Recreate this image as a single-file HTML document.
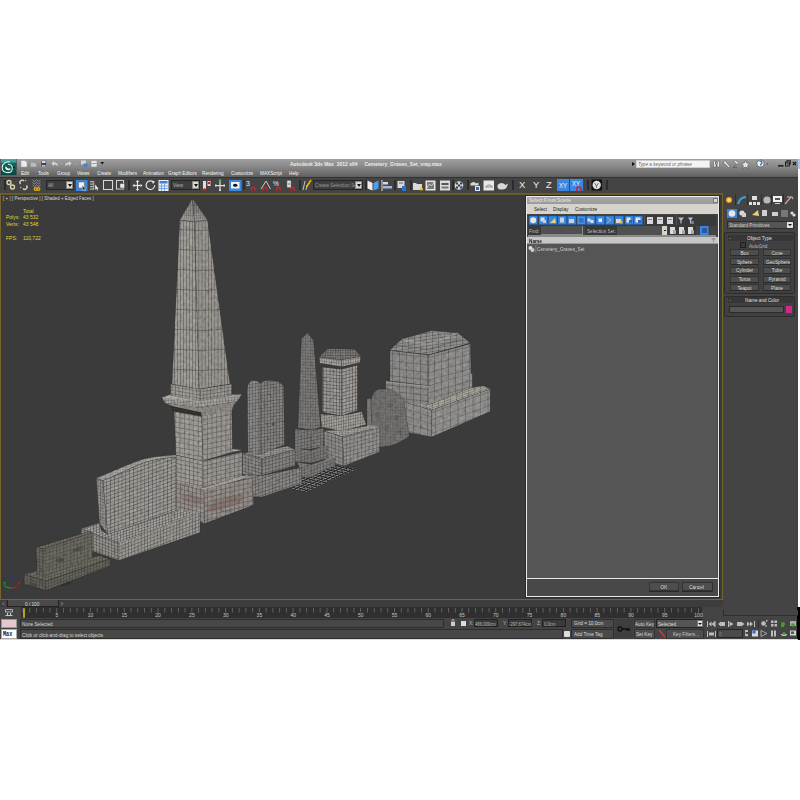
<!DOCTYPE html>
<html><head><meta charset="utf-8">
<style>
*{margin:0;padding:0;box-sizing:border-box}
html,body{width:800px;height:800px;background:#fff;overflow:hidden;font-family:"Liberation Sans",sans-serif}
.a{position:absolute}
.t{position:absolute;white-space:nowrap;font-family:"Liberation Sans",sans-serif}
svg{position:absolute;left:0;top:0}
</style></head><body>
<div class="a" style="left:0px;top:159px;width:798px;height:480px;background:#444"></div>
<div class="a" style="left:798px;top:159px;width:2px;height:9.5px;background:#a4c4ec"></div>
<div class="a" style="left:0px;top:159px;width:798px;height:18px;background:linear-gradient(#a0a0a0,#8a8a8a 40%,#6a6a6a 85%,#5e5e5e)"></div>
<svg style="left:0;top:159px" width="17" height="17" viewBox="0 0 17 17">
<defs><linearGradient id="lg" x1="0" y1="0" x2="0" y2="1"><stop offset="0" stop-color="#48aaa4"/><stop offset=".2" stop-color="#3a9690"/><stop offset=".28" stop-color="#156560"/><stop offset="1" stop-color="#0a4744"/></linearGradient></defs>
<rect x="0" y="0" width="17" height="16.5" fill="#5a5a5a"/>
<rect x="1" y="0" width="15.3" height="16" fill="url(#lg)"/>
<path d="M10 2.8 C6 2.5 2.2 4.5 2.2 8.5 C2.2 12 5 13.6 8 13.6 C11 13.6 12.3 11.5 12.3 9.2 C12.3 6.6 10.4 5.2 8 5.2" fill="none" stroke="#d8ecea" stroke-width="1.1"/>
<path d="M5.2 7.8 C5 10.4 6.6 11.3 8.4 11.3 C10 11.3 10.8 10.4 10.6 9.2 C9 9.8 7 9.4 6.2 7.4z" fill="#f2f8f8"/>
<path d="M12.8 8 h2 l-1 1.3z" fill="#000"/>
</svg>
<svg style="left:0;top:159px" width="110" height="10">
<path d="M21 1.5 h4 l2 2 v4.5 h-6z" fill="#ececec" stroke="#9a9a9a" stroke-width=".5"/>
<path d="M30.5 3 h2.5 l1 1 h2.5 v4 h-6z" fill="#b9bcc0" stroke="#8a8a8a" stroke-width=".5"/>
<rect x="41" y="1.5" width="5.5" height="6.5" rx="1" fill="#3c4050" stroke="#aab" stroke-width=".5"/><rect x="42" y="2" width="3.5" height="2" fill="#ddd"/><rect x="42" y="6" width="3.5" height="1.5" fill="#ccc"/>
<path d="M51.5 4.5 l2.5 -2.5 v1.5 c3 0 4 1.5 4 4 c-1 -1.5 -2 -2 -4 -2 v1.5z" fill="#d8d8d8"/>
<rect x="60.5" y="4.5" width="1" height="1" fill="#c8c8c8"/>
<path d="M71.5 4.5 l-2.5 -2.5 v1.5 c-3 0 -4 1.5 -4 4 c1 -1.5 2 -2 4 -2 v1.5z" fill="#d8d8d8"/>
<rect x="75.5" y="4.5" width="1" height="1" fill="#c8c8c8"/>
<rect x="81" y="1.5" width="5" height="4" fill="#d0d4dc"/><rect x="83.5" y="4.5" width="4" height="3.5" fill="#4a80d0"/>
<rect x="91" y="1.5" width="6" height="6.5" rx="1" fill="#e4e4e4" stroke="#888" stroke-width=".5"/><rect x="91.5" y="4" width="5" height=".6" fill="#777"/>
<path d="M100.5 3 h3.5 l-1.75 2.5z" fill="#111"/>
</svg>
<div class="t" style="left:290px;top:161px;font-size:5px;line-height:6.0px;color:#ececec;"><b>Autodesk 3ds Max&nbsp; 2012 x64&nbsp;&nbsp;&nbsp;&nbsp; Cemetery_Graves_Set_vray.max</b></div>
<div class="a" style="left:632px;top:162px;width:0;height:0;border-top:2px solid transparent;border-bottom:2px solid transparent;border-left:3px solid #111"></div>
<div class="a" style="left:636px;top:160px;width:74px;height:8px;background:#f4f4f4;border:1px solid #ccc"></div>
<div class="t" style="left:638px;top:161.2px;font-size:6.0px;line-height:7.0px;color:#666;transform:scaleX(0.78);transform-origin:0 0;"><i>Type a keyword or phrase</i></div>
<svg style="left:700px;top:159px" width="98" height="10">
<g fill="#e4e4e4" stroke="#333" stroke-width=".4">
<rect x="13.5" y="2" width="2.5" height="6" rx=".8"/><rect x="17" y="2" width="2.5" height="6" rx=".8"/><rect x="15.5" y="3.5" width="2" height="1.5"/>
<path d="M23.5 2.5 l2 -1 l1 2 l3.5 4 l-1.2 1.2 l-3.8 -3.8 l-1.5 -.5z"/>
<path d="M33.5 8 l3 -3 M34 2.5 l3 3 l1.5 -1.5 l-3 -3z M33 8.5 h4"/>
<path d="M745.5 0z"/>
<path d="M45.5 1.5 l1.3 2.6 l2.8 .4 l-2 2 l.5 2.8 l-2.6 -1.3 l-2.6 1.3 l.5 -2.8 l-2 -2 l2.8 -.4z"/>
</g>
<circle cx="60.5" cy="4.5" r="3.6" fill="#f4f4f4" stroke="#444" stroke-width=".6"/><path d="M59.5 2.5 q2 -1 2.5 .8 q.2 1.2 -1.2 1.8 v1.6" stroke="#2a5ac8" stroke-width="1.2" fill="none"/>
<rect x="67" y="4.5" width="1" height="1" fill="#333"/>
<rect x="78" y="6" width="5.5" height="1.6" fill="#222"/>
<rect x="85.5" y="3" width="4" height="4" fill="none" stroke="#222" stroke-width="1"/><rect x="87" y="1.5" width="3.5" height="3.5" fill="none" stroke="#222" stroke-width=".8"/>
<path d="M92.8 2.8 l3.3 3.3 M96.1 2.8 l-3.3 3.3" stroke="#111" stroke-width="1.2"/>
</svg>
<div class="t" style="left:21px;top:170.2px;font-size:6.0px;line-height:7.0px;color:#f8f8f8;transform:scaleX(0.78);transform-origin:0 0;">Edit</div>
<div class="t" style="left:38px;top:170.2px;font-size:6.0px;line-height:7.0px;color:#f8f8f8;transform:scaleX(0.78);transform-origin:0 0;">Tools</div>
<div class="t" style="left:57px;top:170.2px;font-size:6.0px;line-height:7.0px;color:#f8f8f8;transform:scaleX(0.78);transform-origin:0 0;">Group</div>
<div class="t" style="left:77px;top:170.2px;font-size:6.0px;line-height:7.0px;color:#f8f8f8;transform:scaleX(0.78);transform-origin:0 0;">Views</div>
<div class="t" style="left:97px;top:170.2px;font-size:6.0px;line-height:7.0px;color:#f8f8f8;transform:scaleX(0.78);transform-origin:0 0;">Create</div>
<div class="t" style="left:118px;top:170.2px;font-size:6.0px;line-height:7.0px;color:#f8f8f8;transform:scaleX(0.78);transform-origin:0 0;">Modifiers</div>
<div class="t" style="left:143px;top:170.2px;font-size:6.0px;line-height:7.0px;color:#f8f8f8;transform:scaleX(0.78);transform-origin:0 0;">Animation</div>
<div class="t" style="left:168px;top:170.2px;font-size:6.0px;line-height:7.0px;color:#f8f8f8;transform:scaleX(0.78);transform-origin:0 0;">Graph Editors</div>
<div class="t" style="left:202px;top:170.2px;font-size:6.0px;line-height:7.0px;color:#f8f8f8;transform:scaleX(0.78);transform-origin:0 0;">Rendering</div>
<div class="t" style="left:231px;top:170.2px;font-size:6.0px;line-height:7.0px;color:#f8f8f8;transform:scaleX(0.78);transform-origin:0 0;">Customize</div>
<div class="t" style="left:260px;top:170.2px;font-size:6.0px;line-height:7.0px;color:#f8f8f8;transform:scaleX(0.78);transform-origin:0 0;">MAXScript</div>
<div class="t" style="left:289px;top:170.2px;font-size:6.0px;line-height:7.0px;color:#f8f8f8;transform:scaleX(0.78);transform-origin:0 0;">Help</div>
<div class="a" style="left:0px;top:177px;width:798px;height:16px;background:#444;border-top:1px solid #333"></div>
<div class="a" style="left:4px;top:180px;width:1.5px;height:10px;background:#2c2c2c"></div>
<div class="a" style="left:128px;top:180px;width:1.5px;height:10px;background:#2c2c2c"></div>
<div class="a" style="left:243px;top:180px;width:1.5px;height:10px;background:#2c2c2c"></div>
<div class="a" style="left:299px;top:180px;width:1.5px;height:10px;background:#2c2c2c"></div>
<div class="a" style="left:365px;top:180px;width:1.5px;height:10px;background:#2c2c2c"></div>
<div class="a" style="left:394px;top:180px;width:1.5px;height:10px;background:#2c2c2c"></div>
<div class="a" style="left:410px;top:180px;width:1.5px;height:10px;background:#2c2c2c"></div>
<div class="a" style="left:452px;top:180px;width:1.5px;height:10px;background:#2c2c2c"></div>
<div class="a" style="left:467px;top:180px;width:1.5px;height:10px;background:#2c2c2c"></div>
<div class="a" style="left:512px;top:180px;width:1.5px;height:10px;background:#2c2c2c"></div>
<div class="a" style="left:587px;top:180px;width:1.5px;height:10px;background:#2c2c2c"></div>
<div class="a" style="left:606px;top:180px;width:1.5px;height:10px;background:#2c2c2c"></div>
<div class="a" style="left:46px;top:180px;width:28px;height:10px;background:#3e3e3e;border:1px solid #262626"></div>
<div class="t" style="left:48px;top:182.2px;font-size:6.0px;line-height:7.0px;color:#b8b8b8;transform:scaleX(0.78);transform-origin:0 0;">All</div>
<div class="a" style="left:66px;top:181px;width:7px;height:8px;background:#dcd9d0;border:1px solid #888"></div>
<div class="a" style="left:68px;top:184px;width:0;height:0;border-left:2px solid transparent;border-right:2px solid transparent;border-top:3px solid #111"></div>
<div class="a" style="left:171px;top:180px;width:29px;height:10px;background:#3e3e3e;border:1px solid #262626"></div>
<div class="t" style="left:173px;top:182.2px;font-size:6.0px;line-height:7.0px;color:#b8b8b8;transform:scaleX(0.78);transform-origin:0 0;">View</div>
<div class="a" style="left:192px;top:181px;width:7px;height:8px;background:#dcd9d0;border:1px solid #888"></div>
<div class="a" style="left:194px;top:184px;width:0;height:0;border-left:2px solid transparent;border-right:2px solid transparent;border-top:3px solid #111"></div>
<div class="a" style="left:313px;top:180px;width:50px;height:10px;background:#3e3e3e;border:1px solid #262626"></div>
<div class="t" style="left:315px;top:182.2px;font-size:6.0px;line-height:7.0px;color:#9a9a9a;transform:scaleX(0.78);transform-origin:0 0;">Create Selection Se</div>
<div class="a" style="left:355px;top:181px;width:7px;height:8px;background:#dcd9d0;border:1px solid #888"></div>
<div class="a" style="left:357px;top:184px;width:0;height:0;border-left:2px solid transparent;border-right:2px solid transparent;border-top:3px solid #111"></div>
<svg style="left:0;top:177px" width="800" height="16">
<g fill="none" stroke="#e4d8b0" stroke-width="1.3">
<circle cx="9" cy="5.5" r="2"/><circle cx="12.5" cy="10" r="2"/>
<path d="M20.5 7 a2.3 2.3 0 0 1 3.5 -3"/><path d="M26.5 8.5 a2.3 2.3 0 0 1 -3.5 3"/>
</g>
<g fill="#bbb"><rect x="25" y="3" width="1.2" height="1.2"/><rect x="20" y="10" width="1.2" height="1.2"/></g>
<g fill="none" stroke="#a8a8a8" stroke-width=".7"><path d="M32.5 3 l2 1.5 l2 -1.5 l2 1.5 l2 -1.5"/><path d="M32.5 5.5 l2 1.5 l2 -1.5 l2 1.5 l2 -1.5"/><path d="M32.5 8 l2 1.5 l2 -1.5 l2 1.5 l2 -1.5"/></g>
<g fill="none" stroke="#e6b400" stroke-width="1.2"><circle cx="35.5" cy="12" r="1.4"/><circle cx="38.5" cy="12" r="1.4"/></g>
<rect x="76" y="3" width="11.5" height="11" fill="#3a88e0"/>
<rect x="78.5" y="5" width="6" height="6" fill="#f2f2f2" stroke="#555" stroke-width=".5"/><path d="M82 8 l3.5 4 l-1 .3 l.8 1.5 l-.8 .3 l-.8 -1.5 l-1 .7z" fill="#222" stroke="#fff" stroke-width=".4"/>
<g fill="#b8b8b8"><rect x="90" y="4" width="3" height="1.2"/><rect x="90" y="6.5" width="3" height="1.2"/><rect x="90" y="9" width="3" height="1.2"/><rect x="90" y="11.5" width="3" height="1.2"/><rect x="93.2" y="4" width="1" height="9"/></g>
<path d="M95 7.5 l3.5 4 l-1.2 .2 l.8 1.5 l-.8 .4 l-.8 -1.6 l-1.2 .8z" fill="#eee"/>
<rect x="103.5" y="3.5" width="9" height="9" fill="none" stroke="#d8d8d8" stroke-width="1"/><path d="M112 12.5 l1.5 1.5" stroke="#aaa" stroke-width=".8"/>
<rect x="116.5" y="3.5" width="7" height="8.5" fill="none" stroke="#d0d0d0" stroke-width="1"/><rect x="120" y="6.5" width="4.5" height="4.5" fill="#e8e8e8" stroke="#444" stroke-width=".5"/>
<g fill="#e8e8e8"><path d="M137.5 3 l1.8 2 h-3.6z M137.5 14 l1.8 -2 h-3.6z M132.5 8.5 l2 -1.8 v3.6z M142.5 8.5 l-2 -1.8 v3.6z"/><rect x="136.9" y="5" width="1.2" height="7"/><rect x="134.5" y="7.9" width="6" height="1.2"/></g>
<path d="M153.5 5.2 a4.3 4.3 0 1 0 1.2 3" fill="none" stroke="#e4e4e4" stroke-width="1.2"/><path d="M151.5 3.5 l3.5 1 l-2 2.5z" fill="#e4e4e4"/>
<rect x="158.5" y="3" width="10" height="11" fill="#e8eef6"/><rect x="159.5" y="4" width="8" height="2.5" fill="#3a80d8"/><g stroke="#3a80d8" stroke-width=".6"><path d="M159 9 h9 M159 11.5 h9 M161.5 7 v7 M164.5 7 v7"/></g>
<path d="M203 4 h3 v8 h-3z M207.5 4 h3 v5 h-3z" fill="#dedede"/><circle cx="204.5" cy="12.5" r="1.3" fill="#d42020"/><circle cx="209" cy="6" r="1.3" fill="#d42020"/>
<g fill="#e0e0e0"><rect x="219.4" y="4" width="1.2" height="9"/><rect x="215.5" y="8" width="9" height="1.2"/></g><circle cx="220" cy="3.5" r="1.2" fill="#40c040"/><g fill="#e0e0e0"><rect x="215" y="7.5" width="1.5" height="2"/><rect x="223.5" y="7.5" width="1.5" height="2"/><rect x="219" y="12.5" width="2" height="1.5"/></g>
<rect x="229" y="3" width="12.5" height="11" fill="#3a88e0"/><rect x="231" y="5" width="8.5" height="6.5" fill="#f0f0f0"/><ellipse cx="235.2" cy="8.2" rx="2.2" ry="1.5" fill="#111"/>
<text x="246" y="8.5" font-size="7" fill="#eee" font-family="Liberation Sans">3</text>
<g fill="none" stroke="#d42020" stroke-width="1.6"><path d="M251.5 13.5 v-1.5 a1.8 1.8 0 0 1 3.6 0 v1.5"/><path d="M263 13.5 v-1.5 a1.8 1.8 0 0 1 3.6 0 v1.5"/><path d="M276.5 13.5 v-1.5 a1.8 1.8 0 0 1 3.6 0 v1.5"/><path d="M290.5 13.5 v-1.5 a1.8 1.8 0 0 1 3.6 0 v1.5"/></g>
<path d="M261 12 l5 -8 l4.5 8" fill="none" stroke="#d8d8d8" stroke-width=".9"/>
<text x="273" y="8.5" font-size="6.5" fill="#eee" font-family="Liberation Sans">%</text>
<rect x="287" y="3.5" width="4" height="7" fill="#e0e0e0" stroke="#666" stroke-width=".5"/><rect x="288" y="6.6" width="2" height=".8" fill="#444"/>
<path d="M303 13 l2 -9 M306 13 l1 -5" stroke="#d0d0d0" stroke-width=".9"/><path d="M306.5 10 l4.5 -7" stroke="#e8b800" stroke-width="1.6"/>
<path d="M367.5 3.5 l5 2.5 v7.5 l-5 -2z" fill="#eee"/><path d="M373.5 6 l5 -2.5 v8 l-5 2z" fill="#4aa0f0"/>
<g fill="#d8d8d8"><rect x="381.5" y="3" width="1" height="11"/><rect x="383" y="5" width="5" height="2.5"/><rect x="383" y="9" width="9" height="2.5" fill="#9ab8e0"/></g>
<rect x="397.5" y="4" width="7" height="7" fill="#d8d8d8"/><rect x="399" y="5.5" width="4" height="1" fill="#666"/><rect x="402" y="9" width="4" height="5" fill="#3070d0"/>
<path d="M413 6 h3 l1 1 h5 v6 h-9z" fill="#d8d8d8"/><circle cx="421.5" cy="12" r="1.6" fill="#f0c020"/>
<rect x="425.5" y="3.5" width="10" height="10" fill="#e6e6e6"/><rect x="427" y="5" width="7" height="7" fill="#777"/><path d="M427 11 q2 -5 3.5 -3 t3.5 -3" stroke="#eee" fill="none" stroke-width=".8"/>
<rect x="440" y="3.5" width="10" height="10" fill="#dcdcdc"/><rect x="441.5" y="6" width="7" height="2" fill="#555"/><rect x="441.5" y="9.5" width="7" height="2" fill="#777"/>
<circle cx="459" cy="8.5" r="4.3" fill="#d8d8d8"/><g fill="#3a3a3a"><rect x="456" y="5.5" width="2" height="2"/><rect x="460" y="5.5" width="2" height="2"/><rect x="458" y="7.5" width="2" height="2"/><rect x="456" y="9.5" width="2" height="2"/><rect x="460" y="9.5" width="2" height="2"/></g><circle cx="461.5" cy="10" r="1.2" fill="#2a6ad0"/>
<path d="M470.5 6.5 q3 -3 6 0 l2 -1 v3 h-8z" fill="#d8d8d8"/><rect x="475" y="9" width="5" height="5" fill="#e8e8e8"/><rect x="476" y="10" width="3" height="3" fill="#2a6ad0"/>
<rect x="483.5" y="3.5" width="10.5" height="10" fill="#e8e8e8"/><path d="M485.5 10 q3.5 -4 7 0z" fill="none" stroke="#666" stroke-width=".7"/>
<path d="M497.5 8 q4 -4 8 0 l2.5 -1.5 l-1 3 q-1 3 -4.5 3 h-2 q-3 0 -3 -3z" fill="#d8d8d8"/>
<rect x="591.5" y="2.5" width="10.5" height="11" fill="#111"/><circle cx="596.7" cy="8" r="4.2" fill="#e0e0e0"/><path d="M594.5 6 l2 3 l2 -3 M596.5 9 v2" stroke="#444" stroke-width=".7" fill="none"/>
</svg>
<div class="t" style="left:519px;top:180px;font-size:9.5px;line-height:10.5px;color:#eee;line-height:10px">X</div>
<div class="t" style="left:533px;top:180px;font-size:9.5px;line-height:10.5px;color:#eee;line-height:10px">Y</div>
<div class="t" style="left:546px;top:180px;font-size:9.5px;line-height:10.5px;color:#eee;line-height:10px">Z</div>
<div class="a" style="left:557px;top:179px;width:12px;height:12px;background:#3a88e0"></div>
<div class="t" style="left:558.5px;top:182.2px;font-size:7.8px;line-height:8.8px;color:#f0f4ff;transform:scaleX(0.78);transform-origin:0 0;line-height:7px">XY</div>
<div class="a" style="left:570px;top:179px;width:13px;height:12px;background:#3a88e0"></div>
<div class="t" style="left:572px;top:180.2px;font-size:7.8px;line-height:8.8px;color:#f0f4ff;transform:scaleX(0.78);transform-origin:0 0;line-height:7px">XY</div>
<svg style="left:576px;top:186px" width="6" height="5"><path d="M1 5 v-2 a2 2 0 0 1 4 0 v2" fill="none" stroke="#d42020" stroke-width="1.6"/></svg>
<div class="a" style="left:0px;top:193px;width:723px;height:407px;background:#3b3b3b;border:1px solid #74652c;border-top:2px solid #6a5c2a;box-shadow:inset 0 1px 0 #3a3830"></div>
<div class="t" style="left:3px;top:196px;font-size:4.5px;line-height:5.5px;color:#d8d8d8;">[ + ] [ Perspective ] [ Shaded + Edged Faces ]</div>
<div class="t" style="left:23px;top:208px;font-size:5px;line-height:6.0px;color:#e4d23c;">Total</div>
<div class="t" style="left:6px;top:214px;font-size:5px;line-height:6.0px;color:#e4d23c;">Polys:</div>
<div class="t" style="left:23px;top:214px;font-size:5px;line-height:6.0px;color:#e4d23c;">43 532</div>
<div class="t" style="left:6px;top:221px;font-size:5px;line-height:6.0px;color:#e4d23c;">Verts:</div>
<div class="t" style="left:23px;top:221px;font-size:5px;line-height:6.0px;color:#e4d23c;">43 548</div>
<div class="t" style="left:6px;top:235px;font-size:5px;line-height:6.0px;color:#e4d23c;">FPS:</div>
<div class="t" style="left:23px;top:235px;font-size:5px;line-height:6.0px;color:#e4d23c;">110,722</div>
<svg style="left:0;top:570px" width="30" height="22">
<path d="M11.4 18.4 V9" stroke="#2030c0" stroke-width="1.2"/>
<path d="M11.4 18.4 L6 17 L4 14.5" stroke="#10a020" stroke-width="1.2" fill="none"/>
<path d="M11.4 18.4 L17 16.5" stroke="#c02020" stroke-width="1.2"/>
<path d="M11.5 5 h2 l-2 2 h2" stroke="#2030c0" stroke-width=".8" fill="none"/>
<rect x="3.5" y="12" width="2" height="1.6" fill="#10a020"/>
<rect x="18" y="12.5" width="1.8" height="1.8" fill="#c02020"/>
</svg>
<svg style="left:0;top:0" width="800" height="800" viewBox="0 0 800 800"><defs><pattern id="p0" width="7" height="7.5" patternUnits="userSpaceOnUse" patternTransform="skewY(6.60)"><path d="M0 0.3H7M0.3 0V7.5" stroke="#1e1e1e" stroke-width="0.6" stroke-opacity="0.5" fill="none"/></pattern><pattern id="p1" width="7" height="7.5" patternUnits="userSpaceOnUse" patternTransform="skewY(-15.07)"><path d="M0 0.3H7M0.3 0V7.5" stroke="#1e1e1e" stroke-width="0.6" stroke-opacity="0.5" fill="none"/></pattern><pattern id="p2" width="6" height="3.2" patternUnits="userSpaceOnUse" patternTransform="skewY(-8.53)"><path d="M0 0.3H6M0.3 0V3.2" stroke="#1e1e1e" stroke-width="0.6" stroke-opacity="0.45" fill="none"/></pattern><pattern id="p3" width="7" height="6" patternUnits="userSpaceOnUse" patternTransform="skewY(6.25)"><path d="M0 0.3H7M0.3 0V6" stroke="#1e1e1e" stroke-width="0.6" stroke-opacity="0.5" fill="none"/></pattern><pattern id="p4" width="7" height="6" patternUnits="userSpaceOnUse" patternTransform="skewY(-16.10)"><path d="M0 0.3H7M0.3 0V6" stroke="#1e1e1e" stroke-width="0.6" stroke-opacity="0.5" fill="none"/></pattern><pattern id="p5" width="6" height="2.2" patternUnits="userSpaceOnUse" patternTransform="skewY(-19.29)"><path d="M0 0.3H6M0.3 0V2.2" stroke="#1e1e1e" stroke-width="0.6" stroke-opacity="0.4" fill="none"/></pattern><pattern id="p6" width="7" height="7" patternUnits="userSpaceOnUse" patternTransform="skewY(16.68)"><path d="M0 0.3H7M0.3 0V7" stroke="#1e1e1e" stroke-width="0.6" stroke-opacity="0.5" fill="none"/></pattern><pattern id="p7" width="7.5" height="7" patternUnits="userSpaceOnUse" patternTransform="skewY(-19.75)"><path d="M0 0.3H7.5M0.3 0V7" stroke="#1e1e1e" stroke-width="0.6" stroke-opacity="0.5" fill="none"/></pattern><pattern id="p8" width="3" height="2" patternUnits="userSpaceOnUse" patternTransform="skewY(0.00)"><path d="M0 0.3H3M0.3 0V2" stroke="#1e1e1e" stroke-width="0.6" stroke-opacity="0.3" fill="none"/></pattern><pattern id="p9" width="3.6" height="3.6" patternUnits="userSpaceOnUse" patternTransform="skewY(17.63)"><path d="M0 0.3H3.6M0.3 0V3.6" stroke="#1e1e1e" stroke-width="0.6" stroke-opacity="0.55" fill="none"/></pattern><pattern id="p10" width="3.8" height="3.8" patternUnits="userSpaceOnUse" patternTransform="skewY(-14.83)"><path d="M0 0.3H3.8M0.3 0V3.8" stroke="#1e1e1e" stroke-width="0.6" stroke-opacity="0.55" fill="none"/></pattern><pattern id="p11" width="2.4" height="3" patternUnits="userSpaceOnUse" patternTransform="skewY(-11.31)"><path d="M0 0.3H2.4M0.3 0V3" stroke="#1e1e1e" stroke-width="0.6" stroke-opacity="0.5" fill="none"/></pattern><pattern id="p12" width="3.2" height="3.4" patternUnits="userSpaceOnUse" patternTransform="skewY(5.92)"><path d="M0 0.3H3.2M0.3 0V3.4" stroke="#1e1e1e" stroke-width="0.6" stroke-opacity="0.6" fill="none"/></pattern><pattern id="p13" width="3.2" height="3.4" patternUnits="userSpaceOnUse" patternTransform="skewY(-14.29)"><path d="M0 0.3H3.2M0.3 0V3.4" stroke="#1e1e1e" stroke-width="0.6" stroke-opacity="0.6" fill="none"/></pattern><pattern id="p14" width="2.4" height="3" patternUnits="userSpaceOnUse" patternTransform="skewY(7.00)"><path d="M0 0.3H2.4M0.3 0V3" stroke="#1e1e1e" stroke-width="0.6" stroke-opacity="0.5" fill="none"/></pattern><pattern id="p15" width="2.4" height="3" patternUnits="userSpaceOnUse" patternTransform="skewY(-10.33)"><path d="M0 0.3H2.4M0.3 0V3" stroke="#1e1e1e" stroke-width="0.6" stroke-opacity="0.5" fill="none"/></pattern><pattern id="p16" width="2.5" height="2.5" patternUnits="userSpaceOnUse" patternTransform="skewY(0.00)"><path d="M0 0.3H2.5M0.3 0V2.5" stroke="#1e1e1e" stroke-width="0.6" stroke-opacity="0.5" fill="none"/></pattern><pattern id="p17" width="3.2" height="3.2" patternUnits="userSpaceOnUse" patternTransform="skewY(-19.29)"><path d="M0 0.3H3.2M0.3 0V3.2" stroke="#1e1e1e" stroke-width="0.6" stroke-opacity="0.4" fill="none"/></pattern><pattern id="p18" width="3.2" height="3.2" patternUnits="userSpaceOnUse" patternTransform="skewY(-16.70)"><path d="M0 0.3H3.2M0.3 0V3.2" stroke="#1e1e1e" stroke-width="0.6" stroke-opacity="0.4" fill="none"/></pattern><pattern id="p19" width="3.2" height="3.2" patternUnits="userSpaceOnUse" patternTransform="skewY(-11.31)"><path d="M0 0.3H3.2M0.3 0V3.2" stroke="#1e1e1e" stroke-width="0.6" stroke-opacity="0.4" fill="none"/></pattern><pattern id="p20" width="3.4" height="3.4" patternUnits="userSpaceOnUse" patternTransform="skewY(-18.26)"><path d="M0 0.3H3.4M0.3 0V3.4" stroke="#1e1e1e" stroke-width="0.6" stroke-opacity="0.55" fill="none"/></pattern><pattern id="p21" width="3.4" height="3.4" patternUnits="userSpaceOnUse" patternTransform="skewY(16.70)"><path d="M0 0.3H3.4M0.3 0V3.4" stroke="#1e1e1e" stroke-width="0.6" stroke-opacity="0.55" fill="none"/></pattern><pattern id="p22" width="3.4" height="3.4" patternUnits="userSpaceOnUse" patternTransform="skewY(-15.11)"><path d="M0 0.3H3.4M0.3 0V3.4" stroke="#1e1e1e" stroke-width="0.6" stroke-opacity="0.55" fill="none"/></pattern><pattern id="p23" width="4" height="4.5" patternUnits="userSpaceOnUse" patternTransform="skewY(13.50)"><path d="M0 0.3H4M0.3 0V4.5" stroke="#1e1e1e" stroke-width="0.6" stroke-opacity="0.55" fill="none"/></pattern><pattern id="p24" width="4.5" height="4.5" patternUnits="userSpaceOnUse" patternTransform="skewY(-12.95)"><path d="M0 0.3H4.5M0.3 0V4.5" stroke="#1e1e1e" stroke-width="0.6" stroke-opacity="0.55" fill="none"/></pattern><pattern id="p25" width="4.2" height="4.2" patternUnits="userSpaceOnUse" patternTransform="skewY(12.41)"><path d="M0 0.3H4.2M0.3 0V4.2" stroke="#1e1e1e" stroke-width="0.6" stroke-opacity="0.55" fill="none"/></pattern><pattern id="p26" width="4.5" height="4.2" patternUnits="userSpaceOnUse" patternTransform="skewY(-12.95)"><path d="M0 0.3H4.5M0.3 0V4.2" stroke="#1e1e1e" stroke-width="0.6" stroke-opacity="0.55" fill="none"/></pattern><pattern id="p27" width="4.6" height="5" patternUnits="userSpaceOnUse" patternTransform="skewY(10.20)"><path d="M0 0.3H4.6M0.3 0V5" stroke="#1e1e1e" stroke-width="0.6" stroke-opacity="0.55" fill="none"/></pattern><pattern id="p28" width="4.6" height="5" patternUnits="userSpaceOnUse" patternTransform="skewY(-11.31)"><path d="M0 0.3H4.6M0.3 0V5" stroke="#1e1e1e" stroke-width="0.6" stroke-opacity="0.55" fill="none"/></pattern><pattern id="p29" width="3" height="3" patternUnits="userSpaceOnUse" patternTransform="skewY(-5.71)"><path d="M0 0.3H3M0.3 0V3" stroke="#1e1e1e" stroke-width="0.6" stroke-opacity="0.35" fill="none"/></pattern><pattern id="p30" width="3.5" height="3.5" patternUnits="userSpaceOnUse" patternTransform="skewY(9.65)"><path d="M0 0.3H3.5M0.3 0V3.5" stroke="#1e1e1e" stroke-width="0.6" stroke-opacity="0.5" fill="none"/></pattern><pattern id="p31" width="3.5" height="3.5" patternUnits="userSpaceOnUse" patternTransform="skewY(-9.09)"><path d="M0 0.3H3.5M0.3 0V3.5" stroke="#1e1e1e" stroke-width="0.6" stroke-opacity="0.5" fill="none"/></pattern><pattern id="p32" width="3" height="20" patternUnits="userSpaceOnUse" patternTransform="skewY(2.86)"><path d="M0 0.3H3M0.3 0V20" stroke="#1e1e1e" stroke-width="0.6" stroke-opacity="0.6" fill="none"/></pattern><pattern id="p33" width="3.2" height="20" patternUnits="userSpaceOnUse" patternTransform="skewY(-2.86)"><path d="M0 0.3H3.2M0.3 0V20" stroke="#1e1e1e" stroke-width="0.6" stroke-opacity="0.6" fill="none"/></pattern><pattern id="p34" width="2" height="2.5" patternUnits="userSpaceOnUse" patternTransform="skewY(0.00)"><path d="M0 0.3H2M0.3 0V2.5" stroke="#1e1e1e" stroke-width="0.6" stroke-opacity="0.3" fill="none"/></pattern><pattern id="p35" width="3" height="2.6" patternUnits="userSpaceOnUse" patternTransform="skewY(-18.26)"><path d="M0 0.3H3M0.3 0V2.6" stroke="#1e1e1e" stroke-width="0.6" stroke-opacity="0.55" fill="none"/></pattern><pattern id="p36" width="3" height="3" patternUnits="userSpaceOnUse" patternTransform="skewY(19.80)"><path d="M0 0.3H3M0.3 0V3" stroke="#1e1e1e" stroke-width="0.6" stroke-opacity="0.55" fill="none"/></pattern><pattern id="p37" width="3.2" height="3.4" patternUnits="userSpaceOnUse" patternTransform="skewY(-20.81)"><path d="M0 0.3H3.2M0.3 0V3.4" stroke="#1e1e1e" stroke-width="0.6" stroke-opacity="0.55" fill="none"/></pattern><pattern id="p38" width="2.5" height="3" patternUnits="userSpaceOnUse" patternTransform="skewY(16.70)"><path d="M0 0.3H2.5M0.3 0V3" stroke="#1e1e1e" stroke-width="0.6" stroke-opacity="0.5" fill="none"/></pattern><pattern id="p39" width="3" height="3" patternUnits="userSpaceOnUse" patternTransform="skewY(-16.70)"><path d="M0 0.3H3M0.3 0V3" stroke="#1e1e1e" stroke-width="0.6" stroke-opacity="0.45" fill="none"/></pattern><pattern id="p40" width="3" height="3" patternUnits="userSpaceOnUse" patternTransform="skewY(16.70)"><path d="M0 0.3H3M0.3 0V3" stroke="#1e1e1e" stroke-width="0.6" stroke-opacity="0.45" fill="none"/></pattern><pattern id="p41" width="3" height="3" patternUnits="userSpaceOnUse" patternTransform="skewY(-19.29)"><path d="M0 0.3H3M0.3 0V3" stroke="#1e1e1e" stroke-width="0.6" stroke-opacity="0.45" fill="none"/></pattern><pattern id="p42" width="3" height="2" patternUnits="userSpaceOnUse" patternTransform="skewY(-16.70)"><path d="M0 0.3H3M0.3 0V2" stroke="#1e1e1e" stroke-width="0.6" stroke-opacity="0.45" fill="none"/></pattern><pattern id="p43" width="3" height="3" patternUnits="userSpaceOnUse" patternTransform="skewY(14.04)"><path d="M0 0.3H3M0.3 0V3" stroke="#1e1e1e" stroke-width="0.6" stroke-opacity="0.45" fill="none"/></pattern><pattern id="p44" width="3.5" height="3.5" patternUnits="userSpaceOnUse" patternTransform="skewY(-16.70)"><path d="M0 0.3H3.5M0.3 0V3.5" stroke="#1e1e1e" stroke-width="0.6" stroke-opacity="0.45" fill="none"/></pattern><pattern id="chk" width="4" height="4" patternUnits="userSpaceOnUse" patternTransform="matrix(1.05 -0.475 0.85 0.18 0 0)"><rect width="4" height="4" fill="#2a2a2a"/><path d="M0 0.35H4M0.35 0V4" stroke="#a0a0a0" stroke-width=".7"/></pattern><pattern id="g25" width="2.5" height="3" patternUnits="userSpaceOnUse" patternTransform="skewY(2)"><path d="M0 0.3H2.5M0.3 0V3" stroke="#1e1e1e" stroke-width=".5" stroke-opacity=".45" fill="none"/></pattern><pattern id="g3n" width="3" height="3.2" patternUnits="userSpaceOnUse" patternTransform="skewY(-8)"><path d="M0 0.3H3M0.3 0V3.2" stroke="#1e1e1e" stroke-width=".55" stroke-opacity=".5" fill="none"/></pattern><pattern id="wall" width="3.8" height="3.6" patternUnits="userSpaceOnUse" patternTransform="skewY(-19)"><path d="M0 0.3H3.8M0.3 0V3.6" stroke="#1e1e1e" stroke-width=".6" stroke-opacity=".6" fill="none"/></pattern><filter id="nz" x="0" y="0" width="800" height="800" filterUnits="userSpaceOnUse" color-interpolation-filters="sRGB"><feTurbulence type="fractalNoise" baseFrequency="0.3" numOctaves="3" seed="7" result="t"/><feColorMatrix in="t" type="matrix" values="0.33 0.33 0.33 0 0 0.33 0.33 0.33 0 0 0.33 0.33 0.33 0 0 0 0 0 0 1" result="g"/><feComposite in="SourceGraphic" in2="g" operator="arithmetic" k1="0.6" k2="0.7" k3="0" k4="0"/></filter><linearGradient id="pyrL" x1="0" y1="0" x2="0" y2="1"><stop offset="0" stop-color="#7a7774"/><stop offset="1" stop-color="#a29f9a"/></linearGradient><linearGradient id="pyrR" x1="0" y1="0" x2="0" y2="1"><stop offset="0" stop-color="#74716e"/><stop offset="1" stop-color="#9a9792"/></linearGradient></defs><g filter="url(#nz)"><polygon points="390,350.3 428.9,354.8 428.9,385.7 390,381" fill="#878684"/>
<polygon points="390,350.3 428.9,354.8 428.9,385.7 390,381" fill="url(#p0)"/>
<polygon points="390,350.3 428.9,354.8 428.9,385.7 390,381" fill="none" stroke="#2e2e2e" stroke-width="0.5" stroke-opacity=".45"/>
<polygon points="428.9,354.8 470.5,343.6 471,374 428.9,385.7" fill="#8b8a88"/>
<polygon points="428.9,354.8 470.5,343.6 471,374 428.9,385.7" fill="url(#p1)"/>
<polygon points="428.9,354.8 470.5,343.6 471,374 428.9,385.7" fill="none" stroke="#2e2e2e" stroke-width="0.5" stroke-opacity=".45"/>
<polygon points="389.5,350.3 401.9,339 432.2,330.6 458,332.9 470.5,343 428.9,354.8" fill="#8d8c8a"/>
<polygon points="389.5,350.3 401.9,339 432.2,330.6 458,332.9 470.5,343 428.9,354.8" fill="url(#p2)"/>
<polygon points="389.5,350.3 401.9,339 432.2,330.6 458,332.9 470.5,343 428.9,354.8" fill="none" stroke="#2e2e2e" stroke-width="0.5" stroke-opacity=".45"/>
<path d="M401.9 339 L428 344.5 L458 332.9" fill="none" stroke="#b0afac" stroke-width="1.2" opacity=".45"/>
<path d="M395 345 L428.5 349.5 L465 338" fill="none" stroke="#2e2e2e" stroke-width=".6" opacity=".5"/>
<path d="M389.5 350.3 L428.9 354.8 L470.5 343.6" fill="none" stroke="#2e2e2e" stroke-width=".7" opacity=".6"/>
<polygon points="386,381 428.9,385.7 428.9,404.7 386,401" fill="#858482"/>
<polygon points="386,381 428.9,385.7 428.9,404.7 386,401" fill="url(#p3)"/>
<polygon points="428.9,385.7 472.2,373.2 472.2,387.5 428.9,404.7" fill="#8a8987"/>
<polygon points="428.9,385.7 472.2,373.2 472.2,387.5 428.9,404.7" fill="url(#p4)"/>
<path d="M386 382 L428.9 386.7 L472.2 374.2" fill="none" stroke="#b4b3b0" stroke-width="1" opacity=".45"/>
<polygon points="404,401.7 431.7,410 490.2,389 483.4,386 472.2,387.5 428.9,404.7 404,402" fill="#a4a198"/>
<polygon points="404,401.7 431.7,410 490.2,389 483.4,386 472.2,387.5 428.9,404.7 404,402" fill="url(#p5)"/>
<polygon points="404,401.7 431.7,410 431.7,437 404,431.7" fill="#898886"/>
<polygon points="404,401.7 431.7,410 431.7,437 404,431.7" fill="url(#p6)"/>
<polygon points="404,401.7 431.7,410 431.7,437 404,431.7" fill="none" stroke="#2e2e2e" stroke-width="0.5" stroke-opacity=".45"/>
<polygon points="431.7,410 490.2,389 490.2,411.5 431.7,437" fill="#8e8d8b"/>
<polygon points="431.7,410 490.2,389 490.2,411.5 431.7,437" fill="url(#p7)"/>
<polygon points="431.7,410 490.2,389 490.2,411.5 431.7,437" fill="none" stroke="#2e2e2e" stroke-width="0.5" stroke-opacity=".45"/>
<polygon points="367,399 373,398 373,428 367,427" fill="#767473"/>
<polygon points="367,399 373,398 373,428 367,427" fill="none" stroke="#2e2e2e" stroke-width="0.5" stroke-opacity=".45"/>
<path d="M371 402 C371 392 377 388 383 389 C389 388 395 390 403.5 400 L409 436 C402 442 392 446 380 447 L372 438 Z" fill="#6c6a69" stroke="#3a3a3a" stroke-width=".6"/>
<path d="M380 392 C385 388 398 389 403.5 400 L409 436 C402 442 392 446 380 447 Z" fill="#73716f"/>
<g fill="#4a4846" opacity=".3"><ellipse cx="390" cy="405" rx="3" ry="2"/><ellipse cx="396" cy="418" rx="2.5" ry="3"/><ellipse cx="386" cy="428" rx="2" ry="3"/><ellipse cx="399" cy="432" rx="3" ry="2"/><ellipse cx="377" cy="415" rx="1.5" ry="3"/></g>
<path d="M380 392 C385 388 398 389 403.5 400 L409 436 C402 442 392 446 380 447 Z" fill="url(#g25)" opacity=".6"/>
<polygon points="292,489 306,492 357,469 335,464 300,478" fill="#2c2c2c"/>
<polygon points="292,489 306,492 357,469 335,464 300,478" fill="url(#chk)"/>
<polygon points="323.3,430.7 342.5,436.8 379.5,427 372,425 346,430" fill="#a29f9a"/>
<polygon points="323.3,430.7 342.5,436.8 379.5,427 372,425 346,430" fill="url(#p8)"/>
<polygon points="323.3,430.7 342.5,436.8 344,466 325.3,460.9" fill="#8b8986"/>
<polygon points="323.3,430.7 342.5,436.8 344,466 325.3,460.9" fill="url(#p9)"/>
<polygon points="323.3,430.7 342.5,436.8 344,466 325.3,460.9" fill="none" stroke="#2e2e2e" stroke-width="0.5" stroke-opacity=".45"/>
<polygon points="342.5,436.8 379.5,427 379.5,452 344,466" fill="#908e8b"/>
<polygon points="342.5,436.8 379.5,427 379.5,452 344,466" fill="url(#p10)"/>
<polygon points="342.5,436.8 379.5,427 379.5,452 344,466" fill="none" stroke="#2e2e2e" stroke-width="0.5" stroke-opacity=".45"/>
<polygon points="320.6,414 341.7,415.8 361.8,411.4 366.2,424.6 342.5,431.6 321.5,427" fill="#a4a09b"/>
<polygon points="320.6,414 341.7,415.8 361.8,411.4 366.2,424.6 342.5,431.6 321.5,427" fill="url(#p11)"/>
<polygon points="320.6,414 341.7,415.8 361.8,411.4 366.2,424.6 342.5,431.6 321.5,427" fill="none" stroke="#2e2e2e" stroke-width="0.5" stroke-opacity=".45"/>
<polygon points="322.4,367 341.7,369 341.7,415.8 322.4,412.3" fill="#9a9693"/>
<polygon points="322.4,367 341.7,369 341.7,415.8 322.4,412.3" fill="url(#p12)"/>
<polygon points="322.4,367 341.7,369 341.7,415.8 322.4,412.3" fill="none" stroke="#2e2e2e" stroke-width="0.5" stroke-opacity=".45"/>
<polygon points="341.7,369 357.4,365 357.4,410.6 341.7,415.8" fill="#9d9996"/>
<polygon points="341.7,369 357.4,365 357.4,410.6 341.7,415.8" fill="url(#p13)"/>
<polygon points="341.7,369 357.4,365 357.4,410.6 341.7,415.8" fill="none" stroke="#2e2e2e" stroke-width="0.5" stroke-opacity=".45"/>
<polygon points="318.9,357 341.7,359.8 341.7,366.8 319.8,363.3" fill="#a5a19d"/>
<polygon points="318.9,357 341.7,359.8 341.7,366.8 319.8,363.3" fill="url(#p14)"/>
<polygon points="318.9,357 341.7,359.8 341.7,366.8 319.8,363.3" fill="none" stroke="#2e2e2e" stroke-width="0.5" stroke-opacity=".45"/>
<polygon points="341.7,359.8 360.9,356.3 360,362.4 341.7,366.8" fill="#a8a4a0"/>
<polygon points="341.7,359.8 360.9,356.3 360,362.4 341.7,366.8" fill="url(#p15)"/>
<polygon points="341.7,359.8 360.9,356.3 360,362.4 341.7,366.8" fill="none" stroke="#2e2e2e" stroke-width="0.5" stroke-opacity=".45"/>
<polygon points="318.9,357 327.7,348.4 354.8,349.3 360.9,356.3 341.7,359.8" fill="#7d7a78"/>
<polygon points="318.9,357 327.7,348.4 354.8,349.3 360.9,356.3 341.7,359.8" fill="url(#p16)"/>
<polygon points="318.9,357 327.7,348.4 354.8,349.3 360.9,356.3 341.7,359.8" fill="none" stroke="#2e2e2e" stroke-width="0.5" stroke-opacity=".45"/>
<polygon points="297.5,463 311.5,465 335,457 335,465 311.5,477 302.5,477.5" fill="#7a7876"/>
<polygon points="297.5,463 311.5,465 335,457 335,465 311.5,477 302.5,477.5" fill="url(#p17)"/>
<polygon points="297.5,463 311.5,465 335,457 335,465 311.5,477 302.5,477.5" fill="none" stroke="#2e2e2e" stroke-width="0.5" stroke-opacity=".45"/>
<polygon points="294.9,449 311.5,451 328,445 328,458 311.5,463 294.9,462" fill="#777573"/>
<polygon points="294.9,449 311.5,451 328,445 328,458 311.5,463 294.9,462" fill="url(#p18)"/>
<polygon points="294.9,449 311.5,451 328,445 328,458 311.5,463 294.9,462" fill="none" stroke="#2e2e2e" stroke-width="0.5" stroke-opacity=".45"/>
<polygon points="294.9,429 311.5,430 323.75,428 323.75,446.5 311.5,449 294.9,449" fill="#797775"/>
<polygon points="294.9,429 311.5,430 323.75,428 323.75,446.5 311.5,449 294.9,449" fill="url(#p19)"/>
<polygon points="294.9,429 311.5,430 323.75,428 323.75,446.5 311.5,449 294.9,449" fill="none" stroke="#2e2e2e" stroke-width="0.5" stroke-opacity=".45"/>
<path d="M294.9 449 L311.5 451 L328 445 M297.5 463 L311.5 465 L335 457" stroke="#9a9894" stroke-width="1" fill="none" opacity=".6"/>
<path d="M311.5 430 V477" stroke="#3a3a3a" stroke-width=".6" opacity=".6"/>
<path d="M307.5 332.6 L301.4 338.75 L297.9 428 L313 430 L320.6 427 L313.6 340.5 Z" fill="#7b7977" stroke="#333" stroke-width=".5" stroke-opacity=".5"/>
<path d="M307.5 332.6 L301.4 338.75 L297.9 428 L313 430 L320.6 427 L313.6 340.5 Z" fill="url(#g25)"/>
<polygon points="244,474 262,475.6 301.6,467.5 301.6,483.7 262,497 252.9,496.7" fill="#858381"/>
<polygon points="244,474 262,475.6 301.6,467.5 301.6,483.7 262,497 252.9,496.7" fill="url(#p20)"/>
<polygon points="244,474 262,475.6 301.6,467.5 301.6,483.7 262,497 252.9,496.7" fill="none" stroke="#2e2e2e" stroke-width="0.5" stroke-opacity=".45"/>
<polygon points="242.3,452.8 261.8,458.5 295,449.6 287,446 260,452" fill="#959390"/>
<polygon points="242.3,452.8 261.8,458.5 295,449.6 287,446 260,452" fill="url(#p8)"/>
<polygon points="242.3,452.8 261.8,458.5 295,449.6 287,446 260,452" fill="none" stroke="#2e2e2e" stroke-width="0.5" stroke-opacity=".45"/>
<polygon points="242.3,452.8 261.8,458.5 261.8,475.6 242.3,474" fill="#868482"/>
<polygon points="242.3,452.8 261.8,458.5 261.8,475.6 242.3,474" fill="url(#p21)"/>
<polygon points="242.3,452.8 261.8,458.5 261.8,475.6 242.3,474" fill="none" stroke="#2e2e2e" stroke-width="0.5" stroke-opacity=".45"/>
<polygon points="261.8,458.5 295,449.6 295,465.8 261.8,475.6" fill="#838180"/>
<polygon points="261.8,458.5 295,449.6 295,465.8 261.8,475.6" fill="url(#p22)"/>
<polygon points="261.8,458.5 295,449.6 295,465.8 261.8,475.6" fill="none" stroke="#2e2e2e" stroke-width="0.5" stroke-opacity=".45"/>
<path d="M247.2 389.5 C248 383 250 380.3 253 380.3 C257 380.3 259 382 260.2 383.5 C262 381 266 380.2 270 380.3 C278 380.8 282 383 283.7 386 L284.5 444.7 L260.2 454.5 L248 452.8 Z" fill="#817f7d" stroke="#333" stroke-width=".5" stroke-opacity=".5"/>
<path d="M247.2 389.5 C248 383 250 380.3 253 380.3 C257 380.3 259 382 260.2 383.5 C262 381 266 380.2 270 380.3 C278 380.8 282 383 283.7 386 L284.5 444.7 L260.2 454.5 L248 452.8 Z" fill="url(#g3n)"/>
<path d="M247.2 389.5 C248 383 250 380.3 253 380.3 C257 380.3 259 382 260.2 383.5 L260.2 454.5 L248 452.8 Z" fill="#fff" opacity=".05"/>
<path d="M260.2 385 L260.2 454.5" stroke="#3a3a3a" stroke-width=".7" opacity=".7"/>
<circle cx="273" cy="424" r="1.6" fill="#5a4a40"/>
<polygon points="175.5,482 204,488.75 204.4,523.75 175.5,511" fill="#928c88"/>
<polygon points="175.5,482 204,488.75 204.4,523.75 175.5,511" fill="url(#p23)"/>
<polygon points="175.5,482 204,488.75 204.4,523.75 175.5,511" fill="none" stroke="#2e2e2e" stroke-width="0.5" stroke-opacity=".45"/>
<polygon points="204,488.75 252,477.5 253.75,505 204.4,523.75" fill="#8f8985"/>
<polygon points="204,488.75 252,477.5 253.75,505 204.4,523.75" fill="url(#p24)"/>
<polygon points="204,488.75 252,477.5 253.75,505 204.4,523.75" fill="none" stroke="#2e2e2e" stroke-width="0.5" stroke-opacity=".45"/>
<ellipse cx="226" cy="503" rx="20" ry="5" fill="#6e4e48" opacity=".35" transform="rotate(-20 226 503)"/>
<ellipse cx="192" cy="499" rx="12" ry="4" fill="#6e4e48" opacity=".28" transform="rotate(14 192 499)"/>
<polygon points="176,481 203,487 242,475.6 251,477 204,489.5 178,483" fill="#a09c98"/>
<polygon points="176,455 203,461 203,488 176,482.5" fill="#9b9894"/>
<polygon points="176,455 203,461 203,488 176,482.5" fill="url(#p25)"/>
<polygon points="176,455 203,461 203,488 176,482.5" fill="none" stroke="#2e2e2e" stroke-width="0.5" stroke-opacity=".45"/>
<polygon points="203,461 242,452 242,475.6 203,488" fill="#95928e"/>
<polygon points="203,461 242,452 242,475.6 203,488" fill="url(#p26)"/>
<polygon points="203,461 242,452 242,475.6 203,488" fill="none" stroke="#2e2e2e" stroke-width="0.5" stroke-opacity=".45"/>
<polygon points="174,452 203,458 242,450 232.5,449 202,455" fill="#a3a09c"/>
<polygon points="174,411 201.6,416 203,461 176,455" fill="#9c9894"/>
<polygon points="174,411 201.6,416 203,461 176,455" fill="url(#p27)"/>
<polygon points="174,411 201.6,416 203,461 176,455" fill="none" stroke="#2e2e2e" stroke-width="0.5" stroke-opacity=".45"/>
<polygon points="201.6,416 231.8,410 232.5,452 203,461" fill="#96928e"/>
<polygon points="201.6,416 231.8,410 232.5,452 203,461" fill="url(#p28)"/>
<polygon points="201.6,416 231.8,410 232.5,452 203,461" fill="none" stroke="#2e2e2e" stroke-width="0.5" stroke-opacity=".45"/>
<polygon points="199,411 234,404.5 231.8,410.5 201.6,416.5" fill="#8e8b87"/>
<polygon points="199,411 234,404.5 231.8,410.5 201.6,416.5" fill="url(#g25)" opacity=".6"/>
<polygon points="170,405 201,411 201.6,416.5 174,411.5" fill="#3c3a38"/>
<path d="M171 407 L201 413 M172 409.5 L201 415" stroke="#1e1e1e" stroke-width=".7" opacity=".8"/>
<polygon points="162,397.5 170.6,394.5 200.2,400 231.8,394.5 241.5,394.75 200,401.6" fill="#aaa7a3"/>
<polygon points="162,397.5 200,401.6 241.5,394.75 237.3,401 200,407.8 165,403" fill="#9f9c98"/>
<polygon points="162,397.5 200,401.6 241.5,394.75 237.3,401 200,407.8 165,403" fill="url(#p29)"/>
<path d="M162 397.5 L200 401.6 L241.5 394.75" stroke="#c4c1bc" stroke-width=".9" fill="none" opacity=".6"/>
<polygon points="165,403 200,407.8 200,412 172,406" fill="#8b8884"/>
<polygon points="200,407.8 237.3,401 233,405.5 200,412" fill="#86837f"/>
<polygon points="170.6,384 200.2,389 200.2,401 170.6,395.4" fill="#9c9894"/>
<polygon points="170.6,384 200.2,389 200.2,401 170.6,395.4" fill="url(#p30)"/>
<polygon points="170.6,384 200.2,389 200.2,401 170.6,395.4" fill="none" stroke="#2e2e2e" stroke-width="0.5" stroke-opacity=".45"/>
<polygon points="200.2,389 231.8,384 231.8,395.4 200.2,401" fill="#96928e"/>
<polygon points="200.2,389 231.8,384 231.8,395.4 200.2,401" fill="url(#p31)"/>
<polygon points="200.2,389 231.8,384 231.8,395.4 200.2,401" fill="none" stroke="#2e2e2e" stroke-width="0.5" stroke-opacity=".45"/>
<polygon points="179.75,220 194.4,222 199.2,389 172,384" fill="#9c9893"/>
<polygon points="179.75,220 194.4,222 199.2,389 172,384" fill="url(#p32)"/>
<polygon points="179.75,220 194.4,222 199.2,389 172,384" fill="none" stroke="#2e2e2e" stroke-width="0.5" stroke-opacity=".45"/>
<polygon points="194.4,222 207.5,220 230,384 199.2,389" fill="#95918c"/>
<polygon points="194.4,222 207.5,220 230,384 199.2,389" fill="url(#p33)"/>
<polygon points="194.4,222 207.5,220 230,384 199.2,389" fill="none" stroke="#2e2e2e" stroke-width="0.5" stroke-opacity=".45"/>
<polygon points="192.5,198 179.75,220 194.4,222" fill="url(#pyrL)"/>
<polygon points="192.5,198 179.75,220 194.4,222" fill="url(#p34)"/>
<polygon points="192.5,198 179.75,220 194.4,222" fill="none" stroke="#2e2e2e" stroke-width="0.5" stroke-opacity=".45"/>
<polygon points="192.5,198 194.4,222 207.5,220" fill="url(#pyrR)"/>
<polygon points="192.5,198 194.4,222 207.5,220" fill="url(#p34)"/>
<polygon points="192.5,198 194.4,222 207.5,220" fill="none" stroke="#2e2e2e" stroke-width="0.5" stroke-opacity=".45"/>
<polygon points="81,529 99.5,523 101,530 107.7,534.5 176,510.5 200,511.8 119,543" fill="#a09d99"/>
<polygon points="81,529 99.5,523 101,530 107.7,534.5 176,510.5 200,511.8 119,543" fill="url(#p35)"/>
<polygon points="81,529 119,543 119,560.5 81,547" fill="#928f8b"/>
<polygon points="81,529 119,543 119,560.5 81,547" fill="url(#p36)"/>
<polygon points="81,529 119,543 119,560.5 81,547" fill="none" stroke="#2e2e2e" stroke-width="0.5" stroke-opacity=".45"/>
<polygon points="119,543 200,511.8 200,532.6 119,560.5" fill="#989591"/>
<polygon points="119,543 200,511.8 200,532.6 119,560.5" fill="url(#p37)"/>
<polygon points="119,543 200,511.8 200,532.6 119,560.5" fill="none" stroke="#2e2e2e" stroke-width="0.5" stroke-opacity=".45"/>
<path d="M119 543 L200 511.8" stroke="#c0bcb6" stroke-width="1" opacity=".5"/>
<polygon points="96.25,478.1 103,480.6 107.7,534.5 99.5,523" fill="#94918d"/>
<polygon points="96.25,478.1 103,480.6 107.7,534.5 99.5,523" fill="url(#p38)"/>
<polygon points="96.25,478.1 103,480.6 107.7,534.5 99.5,523" fill="none" stroke="#2e2e2e" stroke-width="0.5" stroke-opacity=".45"/>
<path d="M96.25 478.1 C112 472 128 464 142.5 459.4 C152 457 165 455.5 176.25 455 L176.25 457.5 C166 457.5 156 459.5 146 462 C132 467 118 475 103 480.6 Z" fill="#a6a39f" stroke="#333" stroke-width=".4" stroke-opacity=".5"/>
<path d="M96.25 478.1 C112 472 128 464 142.5 459.4 C152 457 165 455.5 176.25 455 L176.25 457.5 C166 457.5 156 459.5 146 462 C132 467 118 475 103 480.6 Z" fill="url(#g25)" opacity=".7"/>
<path d="M103 480.6 C118 475 132 467 146 462 C156 459.5 166 457.5 176.25 457.5 L176.25 510.5 L107.7 534.5 Z" fill="#9a9793"/>
<path d="M103 480.6 C118 475 132 467 146 462 C156 459.5 166 457.5 176.25 457.5 L176.25 510.5 L107.7 534.5 Z" fill="url(#wall)" stroke="#333" stroke-width=".5" stroke-opacity=".5"/>
<polygon points="23,574.3 46,581 110,559 99,555.6" fill="#6e6c60"/>
<polygon points="23,574.3 46,581 110,559 99,555.6" fill="url(#p39)"/>
<polygon points="23,574.3 46,581 110,559 99,555.6" fill="none" stroke="#2e2e2e" stroke-width="0.5" stroke-opacity=".45"/>
<polygon points="23,574.3 46,581 46,590.5 24,584.5" fill="#605e55"/>
<polygon points="23,574.3 46,581 46,590.5 24,584.5" fill="url(#p40)"/>
<polygon points="23,574.3 46,581 46,590.5 24,584.5" fill="none" stroke="#2e2e2e" stroke-width="0.5" stroke-opacity=".45"/>
<polygon points="46,581 110,559 110,566 46,590.5" fill="#646258"/>
<polygon points="46,581 110,559 110,566 46,590.5" fill="url(#p41)"/>
<polygon points="46,581 110,559 110,566 46,590.5" fill="none" stroke="#2e2e2e" stroke-width="0.5" stroke-opacity=".45"/>
<polygon points="35.8,547.6 90,531 92.5,532.6 44,549" fill="#737165"/>
<polygon points="35.8,547.6 90,531 92.5,532.6 44,549" fill="url(#p42)"/>
<polygon points="35.8,547.6 90,531 92.5,532.6 44,549" fill="none" stroke="#2e2e2e" stroke-width="0.5" stroke-opacity=".45"/>
<polygon points="35.8,547.6 44,549 44,576.6 37,574" fill="#65635a"/>
<polygon points="35.8,547.6 44,549 44,576.6 37,574" fill="url(#p43)"/>
<polygon points="35.8,547.6 44,549 44,576.6 37,574" fill="none" stroke="#2e2e2e" stroke-width="0.5" stroke-opacity=".45"/>
<polygon points="44,549 92.5,532.6 92.5,558 44,576.6" fill="#6a685e"/>
<polygon points="44,549 92.5,532.6 92.5,558 44,576.6" fill="url(#p44)"/>
<polygon points="44,549 92.5,532.6 92.5,558 44,576.6" fill="none" stroke="#2e2e2e" stroke-width="0.5" stroke-opacity=".45"/>
<g fill="#3e3d36" opacity=".6"><ellipse cx="60" cy="560" rx="5" ry="2" transform="rotate(-18 60 560)"/><ellipse cx="78" cy="549" rx="6" ry="1.6" transform="rotate(-18 78 549)"/><ellipse cx="66" cy="584" rx="6" ry="1.5" transform="rotate(-18 66 584)"/><ellipse cx="33" cy="585" rx="4" ry="2"/></g></g></svg>
<div class="a" style="left:723px;top:194px;width:75px;height:422px;background:#444"></div>
<svg style="left:723px;top:194px" width="75" height="130">
<circle cx="6" cy="6" r="3" fill="#f0a020"/><circle cx="6" cy="6" r="1.6" fill="#ffe080"/>
<path d="M15 10 q2 -7 8 -7" stroke="#3aa0e0" stroke-width="2.2" fill="none"/>
<path d="M29 2 h5 v4 h-5z M26 8 h3 v3 h-3z M30 8 h3 v3 h-3z M34 8 h3 v3 h-3z" fill="#e0e0e0"/>
<circle cx="44" cy="6" r="3.6" fill="#b8b8b8"/>
<path d="M50 2 h9 v6 h-9z" fill="#f0f0f0"/><path d="M52 4 h5 v2 h-5z" fill="#555"/><path d="M52 9 h5 v1 h-5z" fill="#ccc"/>
<path d="M62 10 l6 -7" stroke="#e0a090" stroke-width="1.2"/><path d="M64 3 l5 0 l1 2" stroke="#bbb" stroke-width="1.2" fill="none"/>
<g fill="#2e2e2e"><rect x="12" y="0" width="1" height="11"/><rect x="24" y="0" width="1" height="11"/><rect x="38" y="0" width="1" height="11"/><rect x="48" y="0" width="1" height="11"/><rect x="60" y="0" width="1" height="11"/></g>
<rect x="4" y="15" width="10" height="9" fill="#3b82d8"/><circle cx="9" cy="19.5" r="3.3" fill="#e8e8e8"/>
<circle cx="19" cy="19" r="2.6" fill="#dcdcdc"/><rect x="19" y="19" width="4" height="4" fill="#cfcfcf"/>
<path d="M29 21 l6 -5 l1 6z" fill="#e8d070"/>
<path d="M39 16 h5 v6 h-5z" fill="#cfcfcf"/>
<path d="M49 18 h6 v4 h-6z" fill="#d0d0d0"/>
<path d="M58 16 h7 v7 h-7z" fill="#777"/>
<circle cx="69" cy="19" r="1.6" fill="#ddd"/><circle cx="71" cy="21" r="1.6" fill="#ddd"/>
</svg>
<div class="a" style="left:727px;top:221px;width:67px;height:8px;background:#555;border:1px solid #2e2e2e"></div>
<div class="t" style="left:729px;top:222.2px;font-size:6.0px;line-height:7.0px;color:#d0d0d0;transform:scaleX(0.78);transform-origin:0 0;">Standard Primitives</div>
<div class="a" style="left:787px;top:222px;width:6px;height:6px;background:#e0e0e0"></div>
<div class="a" style="left:788px;top:224px;width:0;height:0;border-left:2px solid transparent;border-right:2px solid transparent;border-top:2px solid #111"></div>
<div class="a" style="left:724px;top:232px;width:71px;height:62px;background:#404040;border:1px solid #2c2c2c;border-radius:2px"></div>
<div class="a" style="left:728px;top:235px;width:65px;height:6px;background:#363636"></div>
<div class="t" style="left:729px;top:235.2px;font-size:6.0px;line-height:7.0px;color:#bbb;transform:scaleX(0.78);transform-origin:0 0;">-</div>
<div class="t" style="left:747px;top:235.2px;font-size:6.0px;line-height:7.0px;color:#e0e0e0;transform:scaleX(0.78);transform-origin:0 0;">Object Type</div>
<div class="a" style="left:740px;top:242px;width:6px;height:6px;border:1px solid #1e1e1e;background:#3a3a3a"></div>
<div class="t" style="left:749px;top:243.2px;font-size:6.0px;line-height:7.0px;color:#bbb;transform:scaleX(0.78);transform-origin:0 0;">AutoGrid</div>
<div class="a" style="left:730px;top:249px;width:29px;height:7px;background:#4d4d4d;border:1px solid #333;border-bottom-color:#2a2a2a"></div>
<div class="a" style="left:763px;top:249px;width:28px;height:7px;background:#4d4d4d;border:1px solid #333;border-bottom-color:#2a2a2a"></div>
<div class="t" style="left:730px;top:249.7px;width:29px;text-align:center;font-size:6px;line-height:6px;color:#dcdcdc;transform:scaleX(.78)">Box</div>
<div class="t" style="left:763px;top:249.7px;width:28px;text-align:center;font-size:6px;line-height:6px;color:#dcdcdc;transform:scaleX(.78)">Cone</div>
<div class="a" style="left:730px;top:258px;width:29px;height:7px;background:#4d4d4d;border:1px solid #333;border-bottom-color:#2a2a2a"></div>
<div class="a" style="left:763px;top:258px;width:28px;height:7px;background:#4d4d4d;border:1px solid #333;border-bottom-color:#2a2a2a"></div>
<div class="t" style="left:730px;top:258.7px;width:29px;text-align:center;font-size:6px;line-height:6px;color:#dcdcdc;transform:scaleX(.78)">Sphere</div>
<div class="t" style="left:763px;top:258.7px;width:28px;text-align:center;font-size:6px;line-height:6px;color:#dcdcdc;transform:scaleX(.78)">GeoSphere</div>
<div class="a" style="left:730px;top:266.5px;width:29px;height:7px;background:#4d4d4d;border:1px solid #333;border-bottom-color:#2a2a2a"></div>
<div class="a" style="left:763px;top:266.5px;width:28px;height:7px;background:#4d4d4d;border:1px solid #333;border-bottom-color:#2a2a2a"></div>
<div class="t" style="left:730px;top:267.2px;width:29px;text-align:center;font-size:6px;line-height:6px;color:#dcdcdc;transform:scaleX(.78)">Cylinder</div>
<div class="t" style="left:763px;top:267.2px;width:28px;text-align:center;font-size:6px;line-height:6px;color:#dcdcdc;transform:scaleX(.78)">Tube</div>
<div class="a" style="left:730px;top:275.5px;width:29px;height:7px;background:#4d4d4d;border:1px solid #333;border-bottom-color:#2a2a2a"></div>
<div class="a" style="left:763px;top:275.5px;width:28px;height:7px;background:#4d4d4d;border:1px solid #333;border-bottom-color:#2a2a2a"></div>
<div class="t" style="left:730px;top:276.2px;width:29px;text-align:center;font-size:6px;line-height:6px;color:#dcdcdc;transform:scaleX(.78)">Torus</div>
<div class="t" style="left:763px;top:276.2px;width:28px;text-align:center;font-size:6px;line-height:6px;color:#dcdcdc;transform:scaleX(.78)">Pyramid</div>
<div class="a" style="left:730px;top:284px;width:29px;height:7px;background:#4d4d4d;border:1px solid #333;border-bottom-color:#2a2a2a"></div>
<div class="a" style="left:763px;top:284px;width:28px;height:7px;background:#4d4d4d;border:1px solid #333;border-bottom-color:#2a2a2a"></div>
<div class="t" style="left:730px;top:284.7px;width:29px;text-align:center;font-size:6px;line-height:6px;color:#dcdcdc;transform:scaleX(.78)">Teapot</div>
<div class="t" style="left:763px;top:284.7px;width:28px;text-align:center;font-size:6px;line-height:6px;color:#dcdcdc;transform:scaleX(.78)">Plane</div>
<div class="a" style="left:724px;top:296px;width:71px;height:21px;background:#404040;border:1px solid #2c2c2c;border-radius:2px"></div>
<div class="a" style="left:728px;top:297px;width:65px;height:6px;background:#363636"></div>
<div class="t" style="left:729px;top:297.2px;font-size:6.0px;line-height:7.0px;color:#bbb;transform:scaleX(0.78);transform-origin:0 0;">-</div>
<div class="t" style="left:745px;top:297.2px;font-size:6.0px;line-height:7.0px;color:#e0e0e0;transform:scaleX(0.78);transform-origin:0 0;">Name and Color</div>
<div class="a" style="left:729px;top:306px;width:55px;height:7px;background:#555;border:1px solid #2a2a2a"></div>
<div class="a" style="left:786px;top:306px;width:6px;height:7px;background:#d0288c"></div>
<div class="a" style="left:0px;top:600px;width:723px;height:7px;background:#3d3d3d"></div>
<div class="a" style="left:7px;top:600px;width:52px;height:7px;background:#4a4a4a;border:1px solid #222;border-top:none"></div>
<div class="t" style="left:25px;top:601.2px;font-size:6.0px;line-height:7.0px;color:#ddd;transform:scaleX(0.78);transform-origin:0 0;">0 / 100</div>
<div class="t" style="left:2px;top:600.2px;font-size:7.199999999999999px;line-height:8.2px;color:#999;transform:scaleX(0.78);transform-origin:0 0;">&lt;</div>
<div class="t" style="left:60px;top:600.2px;font-size:7.199999999999999px;line-height:8.2px;color:#999;transform:scaleX(0.78);transform-origin:0 0;">&gt;</div>
<div class="a" style="left:0px;top:607px;width:723px;height:11px;background:#444"></div>
<svg style="left:4px;top:608px" width="12" height="9"><path d="M1.5 1.5 h7 v2.5 h-7z" fill="none" stroke="#c8c8c8" stroke-width=".8"/><path d="M3 5 h1 v2 h-1z M6 5 h1 v2 h-1z M1.5 7 h7 v1 h-7z" fill="#c8c8c8"/></svg>
<div class="a" style="left:21px;top:607px;width:681px;height:11px;background:#2f2f2f"></div>
<svg style="left:21px;top:607px" width="681" height="11"><rect x="1.5" y="1" width="0.9" height="4.5" fill="#666"/><rect x="8.3" y="1" width="0.9" height="4.5" fill="#666"/><rect x="15.0" y="1" width="0.9" height="4.5" fill="#666"/><rect x="21.8" y="1" width="0.9" height="4.5" fill="#666"/><rect x="28.5" y="1" width="0.9" height="4.5" fill="#666"/><rect x="35.3" y="1" width="0.9" height="4.5" fill="#666"/><rect x="42.0" y="1" width="0.9" height="4.5" fill="#666"/><rect x="48.8" y="1" width="0.9" height="4.5" fill="#666"/><rect x="55.5" y="1" width="0.9" height="4.5" fill="#666"/><rect x="62.3" y="1" width="0.9" height="4.5" fill="#666"/><rect x="69.0" y="1" width="0.9" height="4.5" fill="#666"/><rect x="75.8" y="1" width="0.9" height="4.5" fill="#666"/><rect x="82.6" y="1" width="0.9" height="4.5" fill="#666"/><rect x="89.3" y="1" width="0.9" height="4.5" fill="#666"/><rect x="96.1" y="1" width="0.9" height="4.5" fill="#666"/><rect x="102.8" y="1" width="0.9" height="4.5" fill="#666"/><rect x="109.6" y="1" width="0.9" height="4.5" fill="#666"/><rect x="116.3" y="1" width="0.9" height="4.5" fill="#666"/><rect x="123.1" y="1" width="0.9" height="4.5" fill="#666"/><rect x="129.8" y="1" width="0.9" height="4.5" fill="#666"/><rect x="136.6" y="1" width="0.9" height="4.5" fill="#666"/><rect x="143.4" y="1" width="0.9" height="4.5" fill="#666"/><rect x="150.1" y="1" width="0.9" height="4.5" fill="#666"/><rect x="156.9" y="1" width="0.9" height="4.5" fill="#666"/><rect x="163.6" y="1" width="0.9" height="4.5" fill="#666"/><rect x="170.4" y="1" width="0.9" height="4.5" fill="#666"/><rect x="177.1" y="1" width="0.9" height="4.5" fill="#666"/><rect x="183.9" y="1" width="0.9" height="4.5" fill="#666"/><rect x="190.6" y="1" width="0.9" height="4.5" fill="#666"/><rect x="197.4" y="1" width="0.9" height="4.5" fill="#666"/><rect x="204.2" y="1" width="0.9" height="4.5" fill="#666"/><rect x="210.9" y="1" width="0.9" height="4.5" fill="#666"/><rect x="217.7" y="1" width="0.9" height="4.5" fill="#666"/><rect x="224.4" y="1" width="0.9" height="4.5" fill="#666"/><rect x="231.2" y="1" width="0.9" height="4.5" fill="#666"/><rect x="237.9" y="1" width="0.9" height="4.5" fill="#666"/><rect x="244.7" y="1" width="0.9" height="4.5" fill="#666"/><rect x="251.4" y="1" width="0.9" height="4.5" fill="#666"/><rect x="258.2" y="1" width="0.9" height="4.5" fill="#666"/><rect x="264.9" y="1" width="0.9" height="4.5" fill="#666"/><rect x="271.7" y="1" width="0.9" height="4.5" fill="#666"/><rect x="278.5" y="1" width="0.9" height="4.5" fill="#666"/><rect x="285.2" y="1" width="0.9" height="4.5" fill="#666"/><rect x="292.0" y="1" width="0.9" height="4.5" fill="#666"/><rect x="298.7" y="1" width="0.9" height="4.5" fill="#666"/><rect x="305.5" y="1" width="0.9" height="4.5" fill="#666"/><rect x="312.2" y="1" width="0.9" height="4.5" fill="#666"/><rect x="319.0" y="1" width="0.9" height="4.5" fill="#666"/><rect x="325.7" y="1" width="0.9" height="4.5" fill="#666"/><rect x="332.5" y="1" width="0.9" height="4.5" fill="#666"/><rect x="339.2" y="1" width="0.9" height="4.5" fill="#666"/><rect x="346.0" y="1" width="0.9" height="4.5" fill="#666"/><rect x="352.8" y="1" width="0.9" height="4.5" fill="#666"/><rect x="359.5" y="1" width="0.9" height="4.5" fill="#666"/><rect x="366.3" y="1" width="0.9" height="4.5" fill="#666"/><rect x="373.0" y="1" width="0.9" height="4.5" fill="#666"/><rect x="379.8" y="1" width="0.9" height="4.5" fill="#666"/><rect x="386.5" y="1" width="0.9" height="4.5" fill="#666"/><rect x="393.3" y="1" width="0.9" height="4.5" fill="#666"/><rect x="400.0" y="1" width="0.9" height="4.5" fill="#666"/><rect x="406.8" y="1" width="0.9" height="4.5" fill="#666"/><rect x="413.6" y="1" width="0.9" height="4.5" fill="#666"/><rect x="420.3" y="1" width="0.9" height="4.5" fill="#666"/><rect x="427.1" y="1" width="0.9" height="4.5" fill="#666"/><rect x="433.8" y="1" width="0.9" height="4.5" fill="#666"/><rect x="440.6" y="1" width="0.9" height="4.5" fill="#666"/><rect x="447.3" y="1" width="0.9" height="4.5" fill="#666"/><rect x="454.1" y="1" width="0.9" height="4.5" fill="#666"/><rect x="460.8" y="1" width="0.9" height="4.5" fill="#666"/><rect x="467.6" y="1" width="0.9" height="4.5" fill="#666"/><rect x="474.3" y="1" width="0.9" height="4.5" fill="#666"/><rect x="481.1" y="1" width="0.9" height="4.5" fill="#666"/><rect x="487.9" y="1" width="0.9" height="4.5" fill="#666"/><rect x="494.6" y="1" width="0.9" height="4.5" fill="#666"/><rect x="501.4" y="1" width="0.9" height="4.5" fill="#666"/><rect x="508.1" y="1" width="0.9" height="4.5" fill="#666"/><rect x="514.9" y="1" width="0.9" height="4.5" fill="#666"/><rect x="521.6" y="1" width="0.9" height="4.5" fill="#666"/><rect x="528.4" y="1" width="0.9" height="4.5" fill="#666"/><rect x="535.1" y="1" width="0.9" height="4.5" fill="#666"/><rect x="541.9" y="1" width="0.9" height="4.5" fill="#666"/><rect x="548.7" y="1" width="0.9" height="4.5" fill="#666"/><rect x="555.4" y="1" width="0.9" height="4.5" fill="#666"/><rect x="562.2" y="1" width="0.9" height="4.5" fill="#666"/><rect x="568.9" y="1" width="0.9" height="4.5" fill="#666"/><rect x="575.7" y="1" width="0.9" height="4.5" fill="#666"/><rect x="582.4" y="1" width="0.9" height="4.5" fill="#666"/><rect x="589.2" y="1" width="0.9" height="4.5" fill="#666"/><rect x="595.9" y="1" width="0.9" height="4.5" fill="#666"/><rect x="602.7" y="1" width="0.9" height="4.5" fill="#666"/><rect x="609.5" y="1" width="0.9" height="4.5" fill="#666"/><rect x="616.2" y="1" width="0.9" height="4.5" fill="#666"/><rect x="623.0" y="1" width="0.9" height="4.5" fill="#666"/><rect x="629.7" y="1" width="0.9" height="4.5" fill="#666"/><rect x="636.5" y="1" width="0.9" height="4.5" fill="#666"/><rect x="643.2" y="1" width="0.9" height="4.5" fill="#666"/><rect x="650.0" y="1" width="0.9" height="4.5" fill="#666"/><rect x="656.7" y="1" width="0.9" height="4.5" fill="#666"/><rect x="663.5" y="1" width="0.9" height="4.5" fill="#666"/><rect x="670.2" y="1" width="0.9" height="4.5" fill="#666"/><rect x="677.0" y="1" width="0.9" height="4.5" fill="#666"/></svg>
<div class="t" style="left:46.8px;top:612px;width:20px;text-align:center;font-size:5px;line-height:6px;color:#c8c8c8">5</div>
<div class="t" style="left:80.5px;top:612px;width:20px;text-align:center;font-size:5px;line-height:6px;color:#c8c8c8">10</div>
<div class="t" style="left:114.3px;top:612px;width:20px;text-align:center;font-size:5px;line-height:6px;color:#c8c8c8">15</div>
<div class="t" style="left:148.1px;top:612px;width:20px;text-align:center;font-size:5px;line-height:6px;color:#c8c8c8">20</div>
<div class="t" style="left:181.9px;top:612px;width:20px;text-align:center;font-size:5px;line-height:6px;color:#c8c8c8">25</div>
<div class="t" style="left:215.7px;top:612px;width:20px;text-align:center;font-size:5px;line-height:6px;color:#c8c8c8">30</div>
<div class="t" style="left:249.4px;top:612px;width:20px;text-align:center;font-size:5px;line-height:6px;color:#c8c8c8">35</div>
<div class="t" style="left:283.2px;top:612px;width:20px;text-align:center;font-size:5px;line-height:6px;color:#c8c8c8">40</div>
<div class="t" style="left:317.0px;top:612px;width:20px;text-align:center;font-size:5px;line-height:6px;color:#c8c8c8">45</div>
<div class="t" style="left:350.8px;top:612px;width:20px;text-align:center;font-size:5px;line-height:6px;color:#c8c8c8">50</div>
<div class="t" style="left:384.5px;top:612px;width:20px;text-align:center;font-size:5px;line-height:6px;color:#c8c8c8">55</div>
<div class="t" style="left:418.3px;top:612px;width:20px;text-align:center;font-size:5px;line-height:6px;color:#c8c8c8">60</div>
<div class="t" style="left:452.1px;top:612px;width:20px;text-align:center;font-size:5px;line-height:6px;color:#c8c8c8">65</div>
<div class="t" style="left:485.8px;top:612px;width:20px;text-align:center;font-size:5px;line-height:6px;color:#c8c8c8">70</div>
<div class="t" style="left:519.6px;top:612px;width:20px;text-align:center;font-size:5px;line-height:6px;color:#c8c8c8">75</div>
<div class="t" style="left:553.4px;top:612px;width:20px;text-align:center;font-size:5px;line-height:6px;color:#c8c8c8">80</div>
<div class="t" style="left:587.2px;top:612px;width:20px;text-align:center;font-size:5px;line-height:6px;color:#c8c8c8">85</div>
<div class="t" style="left:621.0px;top:612px;width:20px;text-align:center;font-size:5px;line-height:6px;color:#c8c8c8">90</div>
<div class="t" style="left:654.7px;top:612px;width:20px;text-align:center;font-size:5px;line-height:6px;color:#c8c8c8">95</div>
<div class="t" style="left:688.5px;top:612px;width:20px;text-align:center;font-size:5px;line-height:6px;color:#c8c8c8">100</div>
<div class="a" style="left:22.5px;top:608px;width:2.5px;height:9.5px;background:#b4a41e;border-radius:1px"></div>
<div class="a" style="left:0px;top:618px;width:798px;height:21px;background:#444"></div>
<div class="a" style="left:1px;top:619px;width:16px;height:9px;background:#e4c8cc;border:1px solid #999"></div>
<div class="a" style="left:1px;top:629px;width:16px;height:10px;background:#fff;border:1px solid #aaa"></div>
<div class="t" style="left:3px;top:631.2px;font-size:6.6px;line-height:7.6px;color:#0a1a40;transform:scaleX(0.78);transform-origin:0 0;font-family:'Liberation Mono',monospace"><b>Max</b></div>
<div class="a" style="left:20px;top:619px;width:424px;height:9px;background:#474747;border:1px solid #2e2e2e"></div>
<div class="t" style="left:22px;top:621.2px;font-size:6.0px;line-height:7.0px;color:#d8d8d8;transform:scaleX(0.78);transform-origin:0 0;">None Selected</div>
<div class="a" style="left:20px;top:629px;width:543px;height:10px;background:#474747;border:1px solid #2e2e2e"></div>
<div class="t" style="left:22px;top:632.2px;font-size:6.0px;line-height:7.0px;color:#d8d8d8;transform:scaleX(0.78);transform-origin:0 0;">Click or click-and-drag to select objects</div>
<svg style="left:448px;top:619px" width="130" height="21">
<rect x="3" y="3" width="4" height="4" fill="#ccc"/><path d="M4 3 v-1.5 a1 1 0 0 1 2 0 v1.5" stroke="#ccc" fill="none" stroke-width=".8"/>
<rect x="13" y="2" width="5" height="5" fill="#ddd"/>
<rect x="116" y="12" width="6" height="6" fill="#ddd" rx="1"/>
</svg>
<div class="t" style="left:469px;top:620.2px;font-size:6.0px;line-height:7.0px;color:#bbb;transform:scaleX(0.78);transform-origin:0 0;">X:</div>
<div class="a" style="left:474px;top:619px;width:24px;height:8px;background:#3a3a3a;border:1px solid #222"></div>
<div class="t" style="left:475px;top:621.2px;font-size:5.3999999999999995px;line-height:6.4px;color:#b4b4b4;transform:scaleX(0.78);transform-origin:0 0;">486,009cm</div>
<div class="t" style="left:503px;top:620.2px;font-size:6.0px;line-height:7.0px;color:#bbb;transform:scaleX(0.78);transform-origin:0 0;">Y:</div>
<div class="a" style="left:508px;top:619px;width:24px;height:8px;background:#3a3a3a;border:1px solid #222"></div>
<div class="t" style="left:509px;top:621.2px;font-size:5.3999999999999995px;line-height:6.4px;color:#b4b4b4;transform:scaleX(0.78);transform-origin:0 0;">-297,674cm</div>
<div class="t" style="left:537px;top:620.2px;font-size:6.0px;line-height:7.0px;color:#bbb;transform:scaleX(0.78);transform-origin:0 0;">Z:</div>
<div class="a" style="left:542px;top:619px;width:24px;height:8px;background:#3a3a3a;border:1px solid #222"></div>
<div class="t" style="left:544px;top:621.2px;font-size:5.3999999999999995px;line-height:6.4px;color:#b4b4b4;transform:scaleX(0.78);transform-origin:0 0;">0,0cm</div>
<div class="a" style="left:571px;top:619px;width:43px;height:9px;background:#4a4a4a;border:1px solid #2e2e2e"></div>
<div class="t" style="left:574px;top:620.2px;font-size:6.0px;line-height:7.0px;color:#ddd;transform:scaleX(0.78);transform-origin:0 0;">Grid = 10,0cm</div>
<div class="a" style="left:571px;top:629px;width:43px;height:10px;background:#4a4a4a;border:1px solid #2e2e2e"></div>
<div class="t" style="left:574px;top:631.2px;font-size:6.0px;line-height:7.0px;color:#ddd;transform:scaleX(0.78);transform-origin:0 0;">Add Time Tag</div>
<div class="a" style="left:615px;top:619px;width:18px;height:20px;background:#3e3e3e"></div>
<svg style="left:617px;top:624px" width="16" height="10"><circle cx="3" cy="5" r="2" fill="none" stroke="#111" stroke-width="1.4"/><path d="M5 5 h8 M10 5 v2 M12 5 v2" stroke="#111" stroke-width="1.3"/></svg>
<div class="a" style="left:634px;top:619px;width:21px;height:9px;background:#4e4e4e;border:1px solid #333"></div>
<div class="t" style="left:635px;top:621.2px;font-size:6.0px;line-height:7.0px;color:#dadada;transform:scaleX(0.78);transform-origin:0 0;">Auto Key</div>
<div class="a" style="left:656px;top:619px;width:47px;height:9px;background:#555;border:1px solid #222"></div>
<div class="t" style="left:658px;top:621.2px;font-size:6.0px;line-height:7.0px;color:#ddd;transform:scaleX(0.78);transform-origin:0 0;">Selected</div>
<div class="a" style="left:697px;top:620px;width:6px;height:7px;background:#e4e2dc;border:1px solid #777"></div>
<div class="a" style="left:698px;top:623px;width:0;height:0;border-left:2px solid transparent;border-right:2px solid transparent;border-top:2px solid #111"></div>
<div class="a" style="left:634px;top:629px;width:21px;height:10px;background:#4e4e4e;border:1px solid #333"></div>
<div class="t" style="left:636px;top:631.2px;font-size:6.0px;line-height:7.0px;color:#dadada;transform:scaleX(0.78);transform-origin:0 0;">Set Key</div>
<svg style="left:658px;top:629px" width="9" height="10"><path d="M1 1 l6 7" stroke="#d23a3a" stroke-width="1.3"/></svg>
<div class="a" style="left:666px;top:629px;width:38px;height:10px;background:#4e4e4e;border:1px solid #333"></div>
<div class="t" style="left:673px;top:631.2px;font-size:6.0px;line-height:7.0px;color:#ccc;transform:scaleX(0.78);transform-origin:0 0;">Key Filters...</div>
<svg style="left:700px;top:617px" width="100" height="23">
<rect x="22" y="-1" width="76" height="0.8" fill="#2a2a2a"/>
<g fill="#bdbdbd">
<path d="M7 4 h1 v6 h-1z M8.5 7 l3 -2.5 v5z M11.5 7 l3 -2.5 v5z M14.5 4 h1 v6 h-1z"/>
<path d="M18 7 l3 -2.5 v5z M21 5 h4 v4 h-4z"/>
<path d="M28 4 h1 v6 h-1z M29.5 4.5 l4 2.5 l-4 2.5z"/>
<path d="M37 5 h4 v4 h-4z M41 4.5 l3.5 2.5 l-3.5 2.5z"/>
<path d="M47 4.5 l3 2.5 l-3 2.5z M50 4.5 l3 2.5 l-3 2.5z M54 4 h1 v6 h-1z"/>
<path d="M7 14 h1 v6 h-1z M9 15.5 h5 v3 h-5z M15 14 h1 v6 h-1z"/>
<path d="M745 0z"/>
<circle cx="63.5" cy="6.5" r="2.3"/><rect x="66" y="3" width="1.5" height="1.5"/><rect x="65" y="8" width="2" height="2" fill="#888"/>
<path d="M71 3.5 h2.5 v2.5 h-2.5z M74.5 3.5 h2.5 v2.5 h-2.5z M71 7 h2.5 v2.5 h-2.5z M74.5 7 h2.5 v2.5 h-2.5z"/>
<path d="M790 0z"/>
<rect x="90" y="4" width="6" height="5" fill="#aaa"/>
<path d="M45 14 h1 v5 h-1z M46 13.5 h2 v1 h-2z M46 18.5 h2 v1 h-2z" fill="#888"/>
<rect x="52" y="13.5" width="6" height="6" fill="#d8d8d8"/><rect x="52.5" y="13.5" width="3" height="3" fill="#2e6ad0"/>
<path d="M61 13.5 l6 3 l-6 3z" fill="none" stroke="#bbb" stroke-width=".8"/>
<path d="M71 13.5 h2 v6 h-2z M74 13.5 h2 v6 h-2z"/>
<path d="M81 17 a3 2 0 1 0 6 0z"/><rect x="90" y="13.5" width="6" height="5" fill="#d0d0d0"/><rect x="91" y="14.5" width="3" height="2.5" fill="#555"/>
</g>
<circle cx="83" cy="7" r="2" fill="#3fa02a"/><rect x="81" y="7" width="3" height="3" fill="#3fa02a"/>
<circle cx="93" cy="8" r="1.8" fill="#3fa02a"/>
<circle cx="84" cy="16.5" r="1.6" fill="#3fa02a"/>
</svg>
<div class="a" style="left:717px;top:629px;width:26px;height:9px;background:#4a4a4a;border:1px solid #262626"></div>
<div class="t" style="left:719px;top:631.2px;font-size:6.0px;line-height:7.0px;color:#888;transform:scaleX(0.78);transform-origin:0 0;">0</div>
<div class="a" style="left:745px;top:630px;width:3px;height:2px;background:#bbb"></div>
<div class="a" style="left:745px;top:634px;width:3px;height:2px;background:#bbb"></div>
<div class="a" style="left:758px;top:620px;width:1px;height:8px;background:#2e2e2e"></div>
<div class="a" style="left:797px;top:607px;width:3px;height:33px;background:#000"></div>
<div class="a" style="left:723px;top:610px;width:75px;height:6px;background:#444;border-left:1px solid #2e2e2e;border-bottom:1px solid #2e2e2e"></div>
<div class="a" style="left:0px;top:639px;width:798px;height:1px;background:#dcdad4"></div>
<div class="a" style="left:525px;top:195px;width:195px;height:403px;background:#2a2a2a"></div>
<div class="a" style="left:526px;top:196px;width:193px;height:401px;background:#474747;border:1px solid #ececec"></div>
<div class="a" style="left:527px;top:197px;width:191px;height:7px;background:linear-gradient(#a8a8a8,#9a9a9a)"></div>
<div class="t" style="left:529px;top:197.2px;font-size:6.0px;line-height:7.0px;color:#dcdcdc;transform:scaleX(0.78);transform-origin:0 0;font-weight:bold">Select From Scene</div>
<div class="a" style="left:713px;top:198px;width:5px;height:5px;background:#d8d8d8;border:1px solid #777"></div>
<div class="a" style="left:527px;top:204px;width:191px;height:10px;background:#d6d3cb"></div>
<div class="t" style="left:534px;top:206.2px;font-size:6.0px;line-height:7.0px;color:#222;transform:scaleX(0.78);transform-origin:0 0;">Select</div>
<div class="t" style="left:553px;top:206.2px;font-size:6.0px;line-height:7.0px;color:#222;transform:scaleX(0.78);transform-origin:0 0;">Display</div>
<div class="t" style="left:575px;top:206.2px;font-size:6.0px;line-height:7.0px;color:#222;transform:scaleX(0.78);transform-origin:0 0;">Customize</div>
<div class="a" style="left:527px;top:214px;width:191px;height:23px;background:#444"></div>
<div class="a" style="left:528px;top:215px;width:188px;height:11px;background:#3a3a3a"></div>
<svg style="left:0;top:0" width="800" height="800">
<rect x="529" y="216" width="8.5" height="8.5" fill="#3a86e0" stroke="#1f5fb0" stroke-width=".5"/>
<rect x="539" y="216" width="8.5" height="8.5" fill="#3a86e0" stroke="#1f5fb0" stroke-width=".5"/>
<rect x="548.5" y="216" width="8.5" height="8.5" fill="#3a86e0" stroke="#1f5fb0" stroke-width=".5"/>
<rect x="558" y="216" width="8.5" height="8.5" fill="#3a86e0" stroke="#1f5fb0" stroke-width=".5"/>
<rect x="567.5" y="216" width="8.5" height="8.5" fill="#3a86e0" stroke="#1f5fb0" stroke-width=".5"/>
<rect x="577" y="216" width="8.5" height="8.5" fill="#3a86e0" stroke="#1f5fb0" stroke-width=".5"/>
<rect x="586.5" y="216" width="8.5" height="8.5" fill="#3a86e0" stroke="#1f5fb0" stroke-width=".5"/>
<rect x="596" y="216" width="8.5" height="8.5" fill="#3a86e0" stroke="#1f5fb0" stroke-width=".5"/>
<rect x="605.5" y="216" width="8.5" height="8.5" fill="#3a86e0" stroke="#1f5fb0" stroke-width=".5"/>
<rect x="615" y="216" width="8.5" height="8.5" fill="#3a86e0" stroke="#1f5fb0" stroke-width=".5"/>
<rect x="625" y="216" width="8.5" height="8.5" fill="#3a86e0" stroke="#1f5fb0" stroke-width=".5"/>
<rect x="634" y="216" width="8.5" height="8.5" fill="#3a86e0" stroke="#1f5fb0" stroke-width=".5"/>
<circle cx="533.2" cy="220.2" r="3" fill="#e6e6e6"/>
<rect x="540.5" y="217.5" width="4" height="4" fill="#ddd"/><rect x="543" y="220" width="3" height="3" fill="#ccc"/>
<path d="M550 223 l5 -5 l1 5z" fill="#e8d070"/>
<rect x="560" y="217.5" width="4" height="5" fill="#d0d0d0"/>
<rect x="569" y="219" width="5" height="4" fill="#d0d0d0"/>
<rect x="578.5" y="217.5" width="5.5" height="5.5" fill="#2f70c8" stroke="#6aa0e8" stroke-width=".5"/>
<circle cx="589" cy="220" r="1.8" fill="#ddd"/><circle cx="592" cy="221.5" r="1.8" fill="#ddd"/>
<rect x="598.5" y="218.5" width="3.5" height="3.5" fill="#eee"/>
<path d="M607 217.5 l4 2.5 l-4 3" stroke="#ccc" fill="none" stroke-width=".7"/>
<path d="M616 219 h5 v4 h-5z" fill="#d8d8d8"/><circle cx="621" cy="222" r="1.5" fill="#f0c020"/>
<rect x="626.5" y="217.5" width="4" height="5" fill="#e4e4e4"/><rect x="629" y="220" width="3" height="3" fill="#3060c0"/>
<rect x="635.5" y="217.5" width="5" height="5" fill="#e4e4e4"/><rect x="638" y="220" width="3" height="3" fill="#3060c0"/>
<rect x="647" y="217" width="6" height="7" fill="#d8d8d8"/><rect x="648" y="219" width="4" height="1" fill="#888"/>
<rect x="657" y="217" width="6" height="7" fill="#d8d8d8"/><rect x="658" y="219" width="4" height="1" fill="#888"/>
<rect x="667" y="217" width="6" height="7" fill="#d8d8d8"/><rect x="668" y="219" width="4" height="1" fill="#888"/>
<path d="M678 217.5 h6 l-2.4 3 v3 h-1.2 v-3z" fill="#bcbcbc"/>
<path d="M688 217.5 h5 l-2 3 v3 h-1 v-3z" fill="#bcbcbc"/><rect x="691" y="221" width="3" height="3" fill="#3a86e0"/>
</svg>
<div class="a" style="left:644px;top:215px;width:1px;height:10px;background:#555"></div>
<div class="a" style="left:676px;top:215px;width:1px;height:10px;background:#555"></div>
<div class="a" style="left:528px;top:226px;width:13px;height:9px;background:#393939"></div>
<div class="t" style="left:529px;top:228.2px;font-size:6.0px;line-height:7.0px;color:#bbb;transform:scaleX(0.78);transform-origin:0 0;">Find:</div>
<div class="a" style="left:541px;top:226px;width:42px;height:9px;background:#505050;border-bottom:1px solid #8a8a8a;border-right:1px solid #8a8a8a"></div>
<div class="a" style="left:585px;top:226px;width:32px;height:9px;background:#393939"></div>
<div class="t" style="left:587px;top:228.2px;font-size:6.0px;line-height:7.0px;color:#bbb;transform:scaleX(0.78);transform-origin:0 0;">Selection Set:</div>
<div class="a" style="left:617px;top:226px;width:45px;height:9px;background:#505050"></div>
<div class="a" style="left:662px;top:226px;width:5px;height:9px;background:#d6d3cb"></div>
<div class="a" style="left:664px;top:230px;width:2px;height:1px;background:#222"></div>
<div class="a" style="left:668px;top:226px;width:28px;height:9px;background:#393939"></div>
<svg style="left:0;top:0" width="800" height="800">
<rect x="670" y="227" width="5" height="7" fill="#dcdcdc"/><rect x="673" y="230" width="3" height="4" fill="#aaa"/>
<rect x="679" y="227" width="5" height="7" fill="#dcdcdc"/><rect x="682" y="230" width="3" height="4" fill="#aaa"/>
<rect x="688" y="227" width="5" height="7" fill="#dcdcdc"/><rect x="691" y="230" width="3" height="4" fill="#aaa"/>
<rect x="700" y="226" width="8.5" height="9" fill="#3a86e0"/><rect x="702" y="228" width="5" height="5" fill="#2a5aa0"/>
</svg>
<div class="a" style="left:528px;top:235px;width:188px;height:2px;background:#8a8a8a"></div>
<div class="a" style="left:527px;top:237px;width:191px;height:7px;background:#c6c6c6;border-bottom:1px solid #999"></div>
<div class="t" style="left:529px;top:238.2px;font-size:6.0px;line-height:7.0px;color:#1a1a1a;transform:scaleX(0.78);transform-origin:0 0;"><b>Name</b></div>
<svg style="left:711px;top:238px" width="6" height="5"><path d="M0 0 h5 l-2 2.5 v2 h-1 v-2z" fill="#999"/></svg>
<div class="a" style="left:527px;top:244px;width:190px;height:335px;background:#555"></div>
<svg style="left:528px;top:245px" width="10" height="8"><circle cx="2.5" cy="3" r="2" fill="#ddd"/><circle cx="4.5" cy="5" r="2" fill="#ccc"/><rect x="7.5" y="0" width=".8" height="8" fill="#888"/></svg>
<div class="t" style="left:537px;top:246.2px;font-size:6.0px;line-height:7.0px;color:#cfcfcf;transform:scaleX(0.78);transform-origin:0 0;">Cemetery_Graves_Set</div>
<div class="a" style="left:527px;top:578px;width:191px;height:1px;background:#e8e8e8"></div>
<div class="a" style="left:527px;top:579px;width:191px;height:17px;background:#484848"></div>
<div class="a" style="left:649px;top:582px;width:30px;height:9px;background:#4e4e4e;border:1px solid #333;box-shadow:0 1px 0 #2a2a2a"></div>
<div class="t" style="left:649px;top:583.7px;width:30px;text-align:center;font-size:6px;line-height:6px;color:#ddd;transform:scaleX(.78)">OK</div>
<div class="a" style="left:682px;top:582px;width:31px;height:9px;background:#4e4e4e;border:1px solid #333;box-shadow:0 1px 0 #2a2a2a"></div>
<div class="t" style="left:681px;top:583.7px;width:31px;text-align:center;font-size:6px;line-height:6px;color:#ddd;transform:scaleX(.78)">Cancel</div>
</body></html>
